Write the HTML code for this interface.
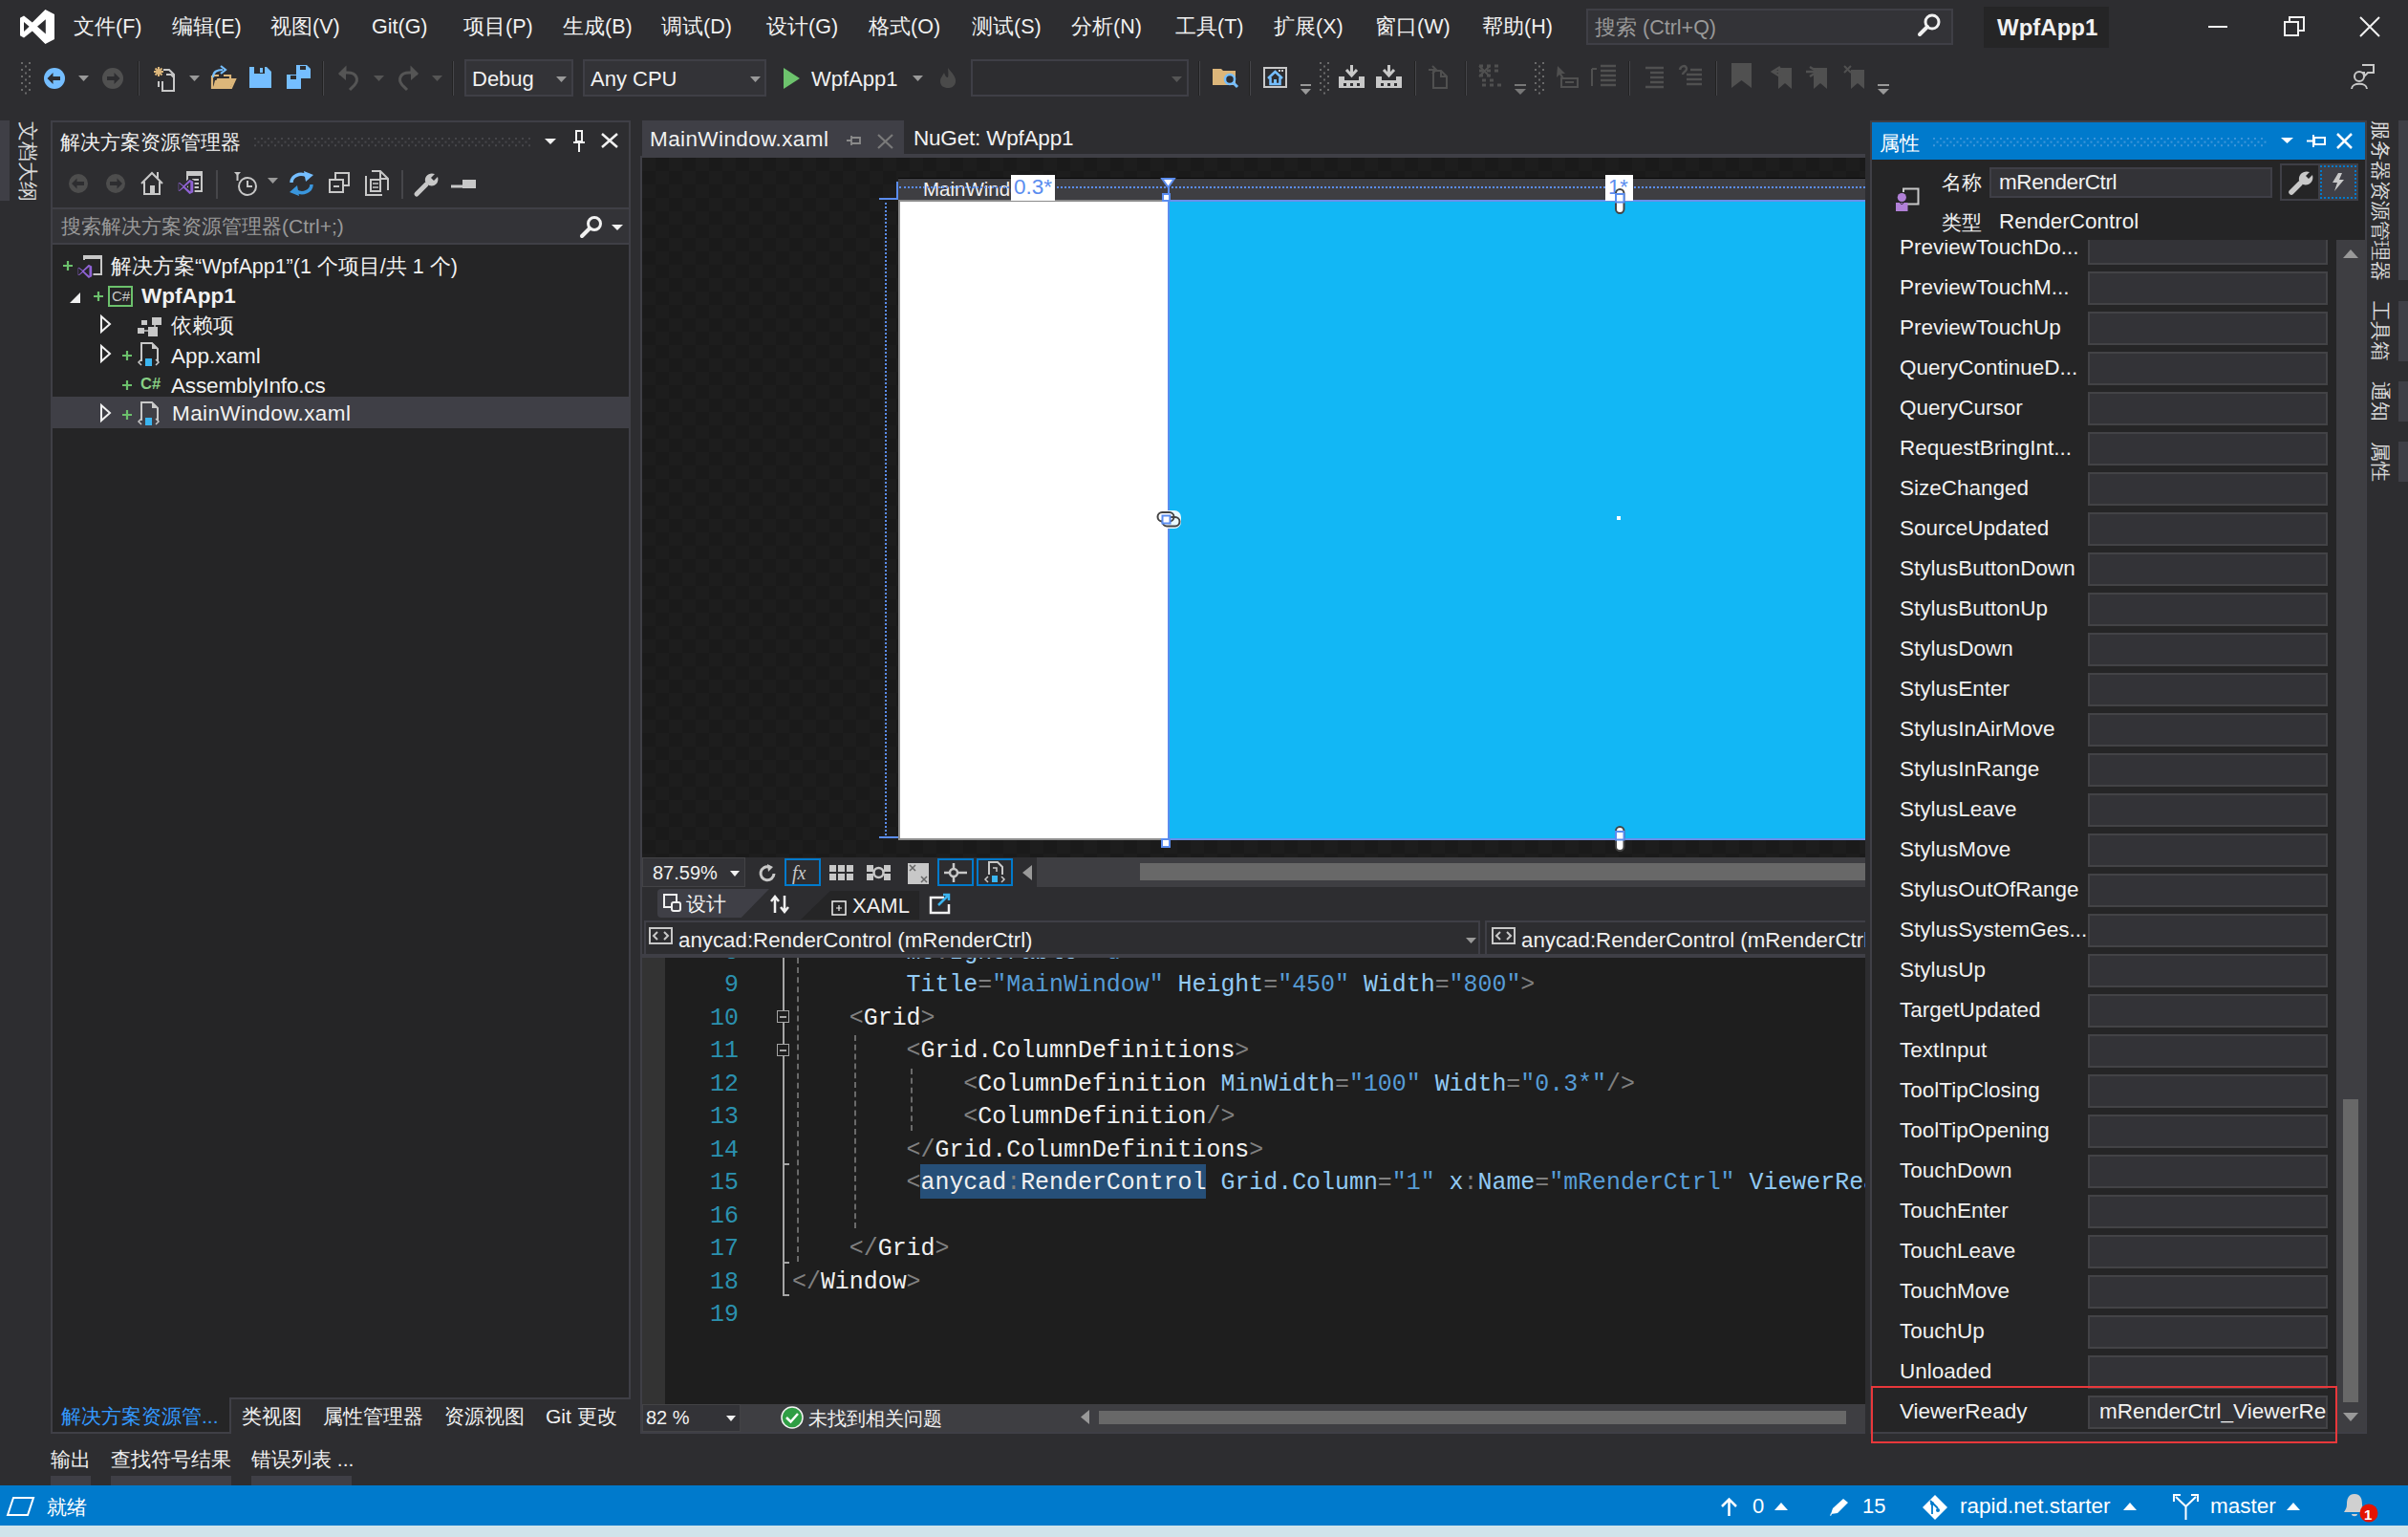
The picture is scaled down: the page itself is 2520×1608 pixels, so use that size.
<!DOCTYPE html><html><head><meta charset="utf-8"><style>
html,body{margin:0;padding:0;}
body{width:2520px;height:1608px;position:relative;overflow:hidden;background:#2d2d30;font-family:"Liberation Sans",sans-serif;}
.a{position:absolute;box-sizing:border-box;}
.t{position:absolute;white-space:pre;}
svg.a{overflow:visible;}
</style></head><body>
<svg class="a" style="left:21px;top:10px;" width="36" height="36" viewBox="0 0 36 36"><path fill="#fff" fill-rule="evenodd" d="M26.4 0 L36 5 L36 31 L26.4 36 L12.8 22.6 L4 29.5 L0 27.2 L0 8.8 L4 6.5 L12.8 13.4 Z M4 13 L9.6 17.8 L4 23 Z M26.8 10.3 L26.8 25.5 L18 17.8 Z"/></svg>
<div class="t" style="left:77px;top:17.8px;line-height:21.5px;font-size:21.5px;color:#f1f1f1;">文件(F)</div>
<div class="t" style="left:180px;top:17.8px;line-height:21.5px;font-size:21.5px;color:#f1f1f1;">编辑(E)</div>
<div class="t" style="left:283px;top:17.8px;line-height:21.5px;font-size:21.5px;color:#f1f1f1;">视图(V)</div>
<div class="t" style="left:389px;top:17.8px;line-height:21.5px;font-size:21.5px;color:#f1f1f1;">Git(G)</div>
<div class="t" style="left:485px;top:17.8px;line-height:21.5px;font-size:21.5px;color:#f1f1f1;">项目(P)</div>
<div class="t" style="left:589px;top:17.8px;line-height:21.5px;font-size:21.5px;color:#f1f1f1;">生成(B)</div>
<div class="t" style="left:692px;top:17.8px;line-height:21.5px;font-size:21.5px;color:#f1f1f1;">调试(D)</div>
<div class="t" style="left:802px;top:17.8px;line-height:21.5px;font-size:21.5px;color:#f1f1f1;">设计(G)</div>
<div class="t" style="left:909px;top:17.8px;line-height:21.5px;font-size:21.5px;color:#f1f1f1;">格式(O)</div>
<div class="t" style="left:1017px;top:17.8px;line-height:21.5px;font-size:21.5px;color:#f1f1f1;">测试(S)</div>
<div class="t" style="left:1121px;top:17.8px;line-height:21.5px;font-size:21.5px;color:#f1f1f1;">分析(N)</div>
<div class="t" style="left:1230px;top:17.8px;line-height:21.5px;font-size:21.5px;color:#f1f1f1;">工具(T)</div>
<div class="t" style="left:1333px;top:17.8px;line-height:21.5px;font-size:21.5px;color:#f1f1f1;">扩展(X)</div>
<div class="t" style="left:1439px;top:17.8px;line-height:21.5px;font-size:21.5px;color:#f1f1f1;">窗口(W)</div>
<div class="t" style="left:1551px;top:17.8px;line-height:21.5px;font-size:21.5px;color:#f1f1f1;">帮助(H)</div>
<div class="a" style="left:1660px;top:9px;width:384px;height:38px;background:#333337;border:2px solid #3f3f46;"></div>
<div class="t" style="left:1669px;top:18.8px;line-height:21.5px;font-size:21.5px;color:#999999;">搜索 (Ctrl+Q)</div>
<svg class="a" style="left:2005px;top:13px;" width="28" height="28" viewBox="0 0 28 28"><circle cx="17" cy="10" r="7" fill="none" stroke="#f1f1f1" stroke-width="3"/><path d="M12 15 L4 23" stroke="#f1f1f1" stroke-width="4" stroke-linecap="round"/></svg>
<div class="a" style="left:2076px;top:7px;width:131px;height:43px;background:#252526;"></div>
<div class="t" style="left:2090px;top:16.7px;line-height:24px;font-size:24px;color:#f1f1f1;font-weight:bold;">WpfApp1</div>
<div class="a" style="left:2311px;top:27px;width:20px;height:2px;background:#f1f1f1;"></div>
<svg class="a" style="left:2390px;top:17px;" width="22" height="22" viewBox="0 0 22 22"><rect x="1" y="6" width="14" height="14" fill="none" stroke="#f1f1f1" stroke-width="2"/><path d="M6 6 V1 H21 V15 H15" fill="none" stroke="#f1f1f1" stroke-width="2"/></svg>
<svg class="a" style="left:2469px;top:17px;" width="22" height="22" viewBox="0 0 22 22"><path d="M1 1 L21 21 M21 1 L1 21" stroke="#f1f1f1" stroke-width="2"/></svg>
<svg class="a" style="left:22px;top:65px;" width="10" height="32" viewBox="0 0 10 32"><rect x="0" y="0" width="2" height="2" fill="#6a6a6a"/><rect x="8" y="0" width="2" height="2" fill="#6a6a6a"/><rect x="4" y="3.5" width="2" height="2" fill="#6a6a6a"/><rect x="0" y="7.0" width="2" height="2" fill="#6a6a6a"/><rect x="8" y="7.0" width="2" height="2" fill="#6a6a6a"/><rect x="4" y="10.5" width="2" height="2" fill="#6a6a6a"/><rect x="0" y="14.0" width="2" height="2" fill="#6a6a6a"/><rect x="8" y="14.0" width="2" height="2" fill="#6a6a6a"/><rect x="4" y="17.5" width="2" height="2" fill="#6a6a6a"/><rect x="0" y="21.0" width="2" height="2" fill="#6a6a6a"/><rect x="8" y="21.0" width="2" height="2" fill="#6a6a6a"/><rect x="4" y="24.5" width="2" height="2" fill="#6a6a6a"/><rect x="0" y="28.0" width="2" height="2" fill="#6a6a6a"/><rect x="8" y="28.0" width="2" height="2" fill="#6a6a6a"/><rect x="4" y="31.5" width="2" height="2" fill="#6a6a6a"/></svg>
<svg class="a" style="left:45px;top:70px;" width="24" height="24" viewBox="0 0 24 24"><circle cx="12" cy="12" r="11" fill="#75beff"/><path d="M4.5 12 L10.5 6 V10 H18 V14 H10.5 V18 Z" fill="#2d2d30"/></svg>
<svg class="a" style="left:82px;top:79px;" width="11" height="6" viewBox="0 0 11 6"><path d="M0 0 H11 L5.5 6 Z" fill="#999999"/></svg>
<svg class="a" style="left:106px;top:70px;" width="24" height="24" viewBox="0 0 24 24"><circle cx="12" cy="12" r="11" fill="#505050"/><path d="M19.5 12 L13.5 6 V10 H6 V14 H13.5 V18 Z" fill="#2d2d30"/></svg>
<div class="a" style="left:144px;top:64px;width:1px;height:36px;background:#222222;"></div>
<div class="a" style="left:145px;top:64px;width:1px;height:36px;background:#46464a;"></div>
<svg class="a" style="left:160px;top:69px;" width="24" height="27" viewBox="0 0 24 27"><path d="M6 1 V11 M1 6 H11 M2.5 2.5 L9.5 9.5 M9.5 2.5 L2.5 9.5" stroke="#dcb67a" stroke-width="2"/><path d="M11 4 H17 L22 9 V17 M14 9 H19 L22 12 V26 H10 V16" fill="none" stroke="#c8c8c8" stroke-width="2"/><path d="M6 16 V22" stroke="#c8c8c8" stroke-width="2"/></svg>
<svg class="a" style="left:198px;top:79px;" width="11" height="6" viewBox="0 0 11 6"><path d="M0 0 H11 L5.5 6 Z" fill="#999999"/></svg>
<svg class="a" style="left:220px;top:69px;" width="27" height="25" viewBox="0 0 27 25"><path d="M2 10 V23 H22 L26 14 H8 L4 23" fill="none" stroke="#dcb67a" stroke-width="2.2"/><path d="M5 15 H25 L21 23 H3 Z" fill="#dcb67a"/><path d="M2 10 H9 M14 10 H21 V14" fill="none" stroke="#dcb67a" stroke-width="2.2"/><path d="M3 12 C3 6 7 4 13 4" fill="none" stroke="#75beff" stroke-width="2.2"/><path d="M11 0 L16 4 L11 8" fill="none" stroke="#75beff" stroke-width="2.2"/></svg>
<svg class="a" style="left:261px;top:70px;" width="23" height="22" viewBox="0 0 23 22"><path d="M0 0 H18 L23 5 V22 H0 Z" fill="#75beff"/><rect x="5" y="0" width="11" height="7" fill="#2d2d30"/><rect x="11" y="1" width="3" height="5" fill="#75beff"/></svg>
<svg class="a" style="left:299px;top:68px;" width="26" height="26" viewBox="0 0 26 26"><path d="M11 0 H22 L26 4 V14 H11 Z" fill="#75beff"/><rect x="15" y="1" width="6" height="4" fill="#2d2d30"/><path d="M1 10 H12 L16 14 V25 H1 Z" fill="#75beff"/><rect x="5" y="11" width="6" height="4" fill="#2d2d30"/></svg>
<div class="a" style="left:337px;top:64px;width:1px;height:36px;background:#222222;"></div>
<div class="a" style="left:338px;top:64px;width:1px;height:36px;background:#46464a;"></div>
<svg class="a" style="left:354px;top:69px;" width="22" height="25" viewBox="0 0 22 25"><path d="M1 9 L7 3 V7 H10 C19 7 22 14 17 20 L12 25" fill="none" stroke="#555555" stroke-width="3"/><path d="M1 9 L8 1 V15 Z" fill="#555555"/></svg>
<svg class="a" style="left:391px;top:79px;" width="11" height="6" viewBox="0 0 11 6"><path d="M0 0 H11 L5.5 6 Z" fill="#555555"/></svg>
<svg class="a" style="left:416px;top:69px;" width="22" height="25" viewBox="0 0 22 25"><path d="M21 9 L15 3 V7 H12 C3 7 0 14 5 20 L10 25" fill="none" stroke="#555555" stroke-width="3"/><path d="M21 9 L14 1 V15 Z" fill="#555555"/></svg>
<svg class="a" style="left:452px;top:79px;" width="11" height="6" viewBox="0 0 11 6"><path d="M0 0 H11 L5.5 6 Z" fill="#555555"/></svg>
<div class="a" style="left:473px;top:64px;width:1px;height:36px;background:#222222;"></div>
<div class="a" style="left:474px;top:64px;width:1px;height:36px;background:#46464a;"></div>
<div class="a" style="left:486px;top:62px;width:114px;height:39px;background:#333337;border:2px solid #3f3f46;"></div>
<div class="t" style="left:494px;top:72.4px;line-height:22px;font-size:22px;color:#f1f1f1;">Debug</div>
<svg class="a" style="left:582px;top:80px;" width="11" height="6" viewBox="0 0 11 6"><path d="M0 0 H11 L5.5 6 Z" fill="#999999"/></svg>
<div class="a" style="left:610px;top:62px;width:192px;height:39px;background:#333337;border:2px solid #3f3f46;"></div>
<div class="t" style="left:618px;top:72.4px;line-height:22px;font-size:22px;color:#f1f1f1;">Any CPU</div>
<svg class="a" style="left:785px;top:80px;" width="11" height="6" viewBox="0 0 11 6"><path d="M0 0 H11 L5.5 6 Z" fill="#999999"/></svg>
<svg class="a" style="left:820px;top:71px;" width="17" height="22" viewBox="0 0 17 22"><path d="M0 0 L17 11 L0 22 Z" fill="#6dc36d"/></svg>
<div class="t" style="left:849px;top:72.4px;line-height:22px;font-size:22px;color:#f1f1f1;">WpfApp1</div>
<svg class="a" style="left:955px;top:79px;" width="11" height="6" viewBox="0 0 11 6"><path d="M0 0 H11 L5.5 6 Z" fill="#999999"/></svg>
<svg class="a" style="left:983px;top:71px;" width="18" height="21" viewBox="0 0 18 21"><path d="M9 0 C14 6 18 10 17 15 C16 20 12 21 9 21 C5 21 1 19 1 14 C1 10 4 8 5 5 C6 8 7 10 9 10 C10 7 9 3 9 0 Z" fill="#4a4a4a"/></svg>
<div class="a" style="left:1016px;top:62px;width:228px;height:39px;background:#2d2d30;border:2px solid #3f3f46;"></div>
<svg class="a" style="left:1226px;top:80px;" width="11" height="6" viewBox="0 0 11 6"><path d="M0 0 H11 L5.5 6 Z" fill="#555555"/></svg>
<div class="a" style="left:1254px;top:64px;width:1px;height:36px;background:#222222;"></div>
<div class="a" style="left:1255px;top:64px;width:1px;height:36px;background:#46464a;"></div>
<svg class="a" style="left:1269px;top:69px;" width="27" height="23" viewBox="0 0 27 23"><path d="M0 3 H9 L11 5 H24 V20 H0 Z" fill="#dcb67a"/><circle cx="18" cy="14" r="5" fill="#2d2d30" stroke="#75beff" stroke-width="2.5"/><path d="M21 17 L26 22" stroke="#75beff" stroke-width="3"/></svg>
<div class="a" style="left:1307px;top:64px;width:1px;height:36px;background:#222222;"></div>
<div class="a" style="left:1308px;top:64px;width:1px;height:36px;background:#46464a;"></div>
<svg class="a" style="left:1322px;top:70px;" width="25" height="22" viewBox="0 0 25 22"><rect x="1" y="1" width="23" height="20" fill="none" stroke="#c8c8c8" stroke-width="2"/><rect x="16" y="3" width="2" height="2" fill="#c8c8c8"/><rect x="19" y="3" width="2" height="2" fill="#c8c8c8"/><path d="M5 12 L12.5 5 L20 12" fill="none" stroke="#75beff" stroke-width="2.5"/><path d="M7.5 11 V18 H17.5 V11" fill="none" stroke="#75beff" stroke-width="2.5"/><rect x="11" y="13" width="3" height="5" fill="#75beff"/></svg>
<svg class="a" style="left:1361px;top:88px;" width="11" height="11" viewBox="0 0 11 11"><rect x="0" y="0" width="11" height="2" fill="#999"/><path d="M0 5 H11 L5.5 11 Z" fill="#999"/></svg>
<svg class="a" style="left:1381px;top:65px;" width="10" height="32" viewBox="0 0 10 32"><rect x="0" y="0" width="2" height="2" fill="#6a6a6a"/><rect x="8" y="0" width="2" height="2" fill="#6a6a6a"/><rect x="4" y="3.5" width="2" height="2" fill="#6a6a6a"/><rect x="0" y="7.0" width="2" height="2" fill="#6a6a6a"/><rect x="8" y="7.0" width="2" height="2" fill="#6a6a6a"/><rect x="4" y="10.5" width="2" height="2" fill="#6a6a6a"/><rect x="0" y="14.0" width="2" height="2" fill="#6a6a6a"/><rect x="8" y="14.0" width="2" height="2" fill="#6a6a6a"/><rect x="4" y="17.5" width="2" height="2" fill="#6a6a6a"/><rect x="0" y="21.0" width="2" height="2" fill="#6a6a6a"/><rect x="8" y="21.0" width="2" height="2" fill="#6a6a6a"/><rect x="4" y="24.5" width="2" height="2" fill="#6a6a6a"/><rect x="0" y="28.0" width="2" height="2" fill="#6a6a6a"/><rect x="8" y="28.0" width="2" height="2" fill="#6a6a6a"/><rect x="4" y="31.5" width="2" height="2" fill="#6a6a6a"/></svg>
<svg class="a" style="left:1401px;top:68px;" width="27" height="24" viewBox="0 0 27 24"><path d="M13.5 0 V10 M8 5 L13.5 11 L19 5" fill="none" stroke="#c8c8c8" stroke-width="3"/><path d="M0 12 H6 V16 H21 V12 H27 V24 H0 Z" fill="#c8c8c8"/><rect x="5" y="19" width="3" height="3" fill="#2d2d30"/><rect x="12" y="19" width="3" height="3" fill="#2d2d30"/><rect x="19" y="19" width="3" height="3" fill="#2d2d30"/></svg>
<svg class="a" style="left:1440px;top:68px;" width="27" height="24" viewBox="0 0 27 24"><path d="M13.5 0 V10 M8 5 L13.5 11 L19 5" fill="none" stroke="#c8c8c8" stroke-width="3"/><path d="M0 12 H6 V16 H21 V12 H27 V24 H0 Z" fill="#c8c8c8"/><rect x="5" y="19" width="3" height="3" fill="#2d2d30"/><rect x="12" y="19" width="3" height="3" fill="#2d2d30"/><rect x="19" y="19" width="3" height="3" fill="#2d2d30"/></svg>
<div class="a" style="left:1480px;top:64px;width:1px;height:36px;background:#222222;"></div>
<div class="a" style="left:1481px;top:64px;width:1px;height:36px;background:#46464a;"></div>
<svg class="a" style="left:1494px;top:68px;" width="22" height="25" viewBox="0 0 22 25"><path d="M6 6 H14 L20 12 V24 H6 Z M14 6 V12 H20" fill="none" stroke="#505050" stroke-width="2"/><path d="M1 5 H8 M5 1 L9 5 L5 9" fill="none" stroke="#505050" stroke-width="2"/></svg>
<div class="a" style="left:1533px;top:64px;width:1px;height:36px;background:#222222;"></div>
<div class="a" style="left:1534px;top:64px;width:1px;height:36px;background:#46464a;"></div>
<svg class="a" style="left:1547px;top:68px;" width="24" height="25" viewBox="0 0 24 25"><path d="M1 1 H5 M1 6 H5 M1 11 H5 M9 1 H13 M9 6 H13 M9 11 H13 M17 1 H21 M17 6 H21 M4 16 H8 M12 16 H16 M4 21 H8 M12 21 H16 M20 21 H24" stroke="#505050" stroke-width="3"/><path d="M1 1 L12 12 M12 1 L1 12" stroke="#505050" stroke-width="2"/></svg>
<svg class="a" style="left:1585px;top:88px;" width="12" height="11" viewBox="0 0 12 11"><rect x="0" y="0" width="12" height="2" fill="#777"/><path d="M0 5 H12 L6 11 Z" fill="#777"/></svg>
<svg class="a" style="left:1606px;top:65px;" width="10" height="32" viewBox="0 0 10 32"><rect x="0" y="0" width="2" height="2" fill="#6a6a6a"/><rect x="8" y="0" width="2" height="2" fill="#6a6a6a"/><rect x="4" y="3.5" width="2" height="2" fill="#6a6a6a"/><rect x="0" y="7.0" width="2" height="2" fill="#6a6a6a"/><rect x="8" y="7.0" width="2" height="2" fill="#6a6a6a"/><rect x="4" y="10.5" width="2" height="2" fill="#6a6a6a"/><rect x="0" y="14.0" width="2" height="2" fill="#6a6a6a"/><rect x="8" y="14.0" width="2" height="2" fill="#6a6a6a"/><rect x="4" y="17.5" width="2" height="2" fill="#6a6a6a"/><rect x="0" y="21.0" width="2" height="2" fill="#6a6a6a"/><rect x="8" y="21.0" width="2" height="2" fill="#6a6a6a"/><rect x="4" y="24.5" width="2" height="2" fill="#6a6a6a"/><rect x="0" y="28.0" width="2" height="2" fill="#6a6a6a"/><rect x="8" y="28.0" width="2" height="2" fill="#6a6a6a"/><rect x="4" y="31.5" width="2" height="2" fill="#6a6a6a"/></svg>
<svg class="a" style="left:1628px;top:68px;" width="24" height="24" viewBox="0 0 24 24"><path d="M2 1 L10 9 L6 9 L9 14 L7 15 L4 10 L1 13 Z" fill="#505050"/><rect x="6" y="14" width="17" height="9" fill="none" stroke="#505050" stroke-width="2"/><path d="M10 18 H19" stroke="#505050" stroke-width="2"/></svg>
<svg class="a" style="left:1665px;top:68px;" width="26" height="25" viewBox="0 0 26 25"><path d="M10 1 H26 M10 6 H26 M10 11 H26 M10 16 H26 M10 21 H26" stroke="#505050" stroke-width="2.5"/><path d="M1 4 V22 M1 4 H6" stroke="#505050" stroke-width="2"/></svg>
<div class="a" style="left:1704px;top:64px;width:1px;height:36px;background:#222222;"></div>
<div class="a" style="left:1705px;top:64px;width:1px;height:36px;background:#46464a;"></div>
<svg class="a" style="left:1722px;top:70px;" width="19" height="21" viewBox="0 0 19 21"><path d="M0 1 H19 M5 6 H19 M5 11 H19 M5 16 H19 M0 21 H19" stroke="#505050" stroke-width="2.5"/></svg>
<svg class="a" style="left:1757px;top:68px;" width="24" height="24" viewBox="0 0 24 24"><path d="M8 10 H24 M8 15 H24 M8 20 H24" stroke="#505050" stroke-width="2.5"/><path d="M1 5 C2 0 8 0 8 4 C8 7 4 7 4 10 M12 5 H24" fill="none" stroke="#505050" stroke-width="2.5"/></svg>
<div class="a" style="left:1795px;top:64px;width:1px;height:36px;background:#222222;"></div>
<div class="a" style="left:1796px;top:64px;width:1px;height:36px;background:#46464a;"></div>
<svg class="a" style="left:1812px;top:66px;" width="21" height="26" viewBox="0 0 21 26"><path d="M0 0 H21 V26 L10.5 18 L0 26 Z" fill="#505050"/></svg>
<svg class="a" style="left:1854px;top:68px;" width="21" height="25" viewBox="0 0 21 25"><path d="M7 3 H21 V25 L14 19 L7 25 Z" fill="#505050"/><path d="M9 2 L1 7 L9 12" fill="none" stroke="#505050" stroke-width="2.5"/><path d="M1 7 H12" stroke="#505050" stroke-width="2.5"/></svg>
<svg class="a" style="left:1890px;top:68px;" width="22" height="25" viewBox="0 0 22 25"><path d="M8 3 H22 V25 L15 19 L8 25 Z" fill="#505050"/><path d="M4 2 L12 7 L4 12" fill="none" stroke="#505050" stroke-width="2.5"/><path d="M0 7 H11" stroke="#505050" stroke-width="2.5"/></svg>
<svg class="a" style="left:1929px;top:68px;" width="22" height="25" viewBox="0 0 22 25"><path d="M8 5 H22 V25 L15 19 L8 25 Z" fill="#505050"/><path d="M1 1 L8 8 M8 1 L1 8" stroke="#505050" stroke-width="2"/></svg>
<svg class="a" style="left:1965px;top:88px;" width="12" height="11" viewBox="0 0 12 11"><rect x="0" y="0" width="12" height="2" fill="#999"/><path d="M0 5 H12 L6 11 Z" fill="#999"/></svg>
<svg class="a" style="left:2460px;top:67px;" width="25" height="27" viewBox="0 0 25 27"><circle cx="9" cy="13" r="5" fill="none" stroke="#c8c8c8" stroke-width="2"/><path d="M1 26 C1 19 17 19 17 26" fill="none" stroke="#c8c8c8" stroke-width="2"/><path d="M12 1 H24 V9 H18 L14 13 V9 H12" fill="none" stroke="#c8c8c8" stroke-width="2"/></svg>
<div class="a" style="left:0px;top:126px;width:10px;height:84px;background:#3f3f46;"></div>
<div class="t" style="left:40px;top:127px;width:84px;height:22px;transform-origin:0 0;transform:rotate(90deg);font-size:20.5px;line-height:22px;color:#dadada;">文档大纲</div>
<div class="a" style="left:53px;top:126px;width:607px;height:2px;background:#3f3f46;"></div>
<div class="a" style="left:53px;top:126px;width:2px;height:1338px;background:#3f3f46;"></div>
<div class="a" style="left:658px;top:126px;width:2px;height:1338px;background:#3f3f46;"></div>
<div class="t" style="left:63px;top:138.2px;line-height:21px;font-size:21px;color:#f1f1f1;">解决方案资源管理器</div>
<svg class="a" style="left:266px;top:144px;" width="290" height="10" viewBox="0 0 290 10"><rect x="0.0" y="0" width="2" height="2" fill="#46464a"/><rect x="7.0" y="0" width="2" height="2" fill="#46464a"/><rect x="14.0" y="0" width="2" height="2" fill="#46464a"/><rect x="21.0" y="0" width="2" height="2" fill="#46464a"/><rect x="28.0" y="0" width="2" height="2" fill="#46464a"/><rect x="35.0" y="0" width="2" height="2" fill="#46464a"/><rect x="42.0" y="0" width="2" height="2" fill="#46464a"/><rect x="49.0" y="0" width="2" height="2" fill="#46464a"/><rect x="56.0" y="0" width="2" height="2" fill="#46464a"/><rect x="63.0" y="0" width="2" height="2" fill="#46464a"/><rect x="70.0" y="0" width="2" height="2" fill="#46464a"/><rect x="77.0" y="0" width="2" height="2" fill="#46464a"/><rect x="84.0" y="0" width="2" height="2" fill="#46464a"/><rect x="91.0" y="0" width="2" height="2" fill="#46464a"/><rect x="98.0" y="0" width="2" height="2" fill="#46464a"/><rect x="105.0" y="0" width="2" height="2" fill="#46464a"/><rect x="112.0" y="0" width="2" height="2" fill="#46464a"/><rect x="119.0" y="0" width="2" height="2" fill="#46464a"/><rect x="126.0" y="0" width="2" height="2" fill="#46464a"/><rect x="133.0" y="0" width="2" height="2" fill="#46464a"/><rect x="140.0" y="0" width="2" height="2" fill="#46464a"/><rect x="147.0" y="0" width="2" height="2" fill="#46464a"/><rect x="154.0" y="0" width="2" height="2" fill="#46464a"/><rect x="161.0" y="0" width="2" height="2" fill="#46464a"/><rect x="168.0" y="0" width="2" height="2" fill="#46464a"/><rect x="175.0" y="0" width="2" height="2" fill="#46464a"/><rect x="182.0" y="0" width="2" height="2" fill="#46464a"/><rect x="189.0" y="0" width="2" height="2" fill="#46464a"/><rect x="196.0" y="0" width="2" height="2" fill="#46464a"/><rect x="203.0" y="0" width="2" height="2" fill="#46464a"/><rect x="210.0" y="0" width="2" height="2" fill="#46464a"/><rect x="217.0" y="0" width="2" height="2" fill="#46464a"/><rect x="224.0" y="0" width="2" height="2" fill="#46464a"/><rect x="231.0" y="0" width="2" height="2" fill="#46464a"/><rect x="238.0" y="0" width="2" height="2" fill="#46464a"/><rect x="245.0" y="0" width="2" height="2" fill="#46464a"/><rect x="252.0" y="0" width="2" height="2" fill="#46464a"/><rect x="259.0" y="0" width="2" height="2" fill="#46464a"/><rect x="266.0" y="0" width="2" height="2" fill="#46464a"/><rect x="273.0" y="0" width="2" height="2" fill="#46464a"/><rect x="280.0" y="0" width="2" height="2" fill="#46464a"/><rect x="287.0" y="0" width="2" height="2" fill="#46464a"/><rect x="3.5" y="3.6" width="2" height="2" fill="#46464a"/><rect x="10.5" y="3.6" width="2" height="2" fill="#46464a"/><rect x="17.5" y="3.6" width="2" height="2" fill="#46464a"/><rect x="24.5" y="3.6" width="2" height="2" fill="#46464a"/><rect x="31.5" y="3.6" width="2" height="2" fill="#46464a"/><rect x="38.5" y="3.6" width="2" height="2" fill="#46464a"/><rect x="45.5" y="3.6" width="2" height="2" fill="#46464a"/><rect x="52.5" y="3.6" width="2" height="2" fill="#46464a"/><rect x="59.5" y="3.6" width="2" height="2" fill="#46464a"/><rect x="66.5" y="3.6" width="2" height="2" fill="#46464a"/><rect x="73.5" y="3.6" width="2" height="2" fill="#46464a"/><rect x="80.5" y="3.6" width="2" height="2" fill="#46464a"/><rect x="87.5" y="3.6" width="2" height="2" fill="#46464a"/><rect x="94.5" y="3.6" width="2" height="2" fill="#46464a"/><rect x="101.5" y="3.6" width="2" height="2" fill="#46464a"/><rect x="108.5" y="3.6" width="2" height="2" fill="#46464a"/><rect x="115.5" y="3.6" width="2" height="2" fill="#46464a"/><rect x="122.5" y="3.6" width="2" height="2" fill="#46464a"/><rect x="129.5" y="3.6" width="2" height="2" fill="#46464a"/><rect x="136.5" y="3.6" width="2" height="2" fill="#46464a"/><rect x="143.5" y="3.6" width="2" height="2" fill="#46464a"/><rect x="150.5" y="3.6" width="2" height="2" fill="#46464a"/><rect x="157.5" y="3.6" width="2" height="2" fill="#46464a"/><rect x="164.5" y="3.6" width="2" height="2" fill="#46464a"/><rect x="171.5" y="3.6" width="2" height="2" fill="#46464a"/><rect x="178.5" y="3.6" width="2" height="2" fill="#46464a"/><rect x="185.5" y="3.6" width="2" height="2" fill="#46464a"/><rect x="192.5" y="3.6" width="2" height="2" fill="#46464a"/><rect x="199.5" y="3.6" width="2" height="2" fill="#46464a"/><rect x="206.5" y="3.6" width="2" height="2" fill="#46464a"/><rect x="213.5" y="3.6" width="2" height="2" fill="#46464a"/><rect x="220.5" y="3.6" width="2" height="2" fill="#46464a"/><rect x="227.5" y="3.6" width="2" height="2" fill="#46464a"/><rect x="234.5" y="3.6" width="2" height="2" fill="#46464a"/><rect x="241.5" y="3.6" width="2" height="2" fill="#46464a"/><rect x="248.5" y="3.6" width="2" height="2" fill="#46464a"/><rect x="255.5" y="3.6" width="2" height="2" fill="#46464a"/><rect x="262.5" y="3.6" width="2" height="2" fill="#46464a"/><rect x="269.5" y="3.6" width="2" height="2" fill="#46464a"/><rect x="276.5" y="3.6" width="2" height="2" fill="#46464a"/><rect x="283.5" y="3.6" width="2" height="2" fill="#46464a"/><rect x="0.0" y="7.2" width="2" height="2" fill="#46464a"/><rect x="7.0" y="7.2" width="2" height="2" fill="#46464a"/><rect x="14.0" y="7.2" width="2" height="2" fill="#46464a"/><rect x="21.0" y="7.2" width="2" height="2" fill="#46464a"/><rect x="28.0" y="7.2" width="2" height="2" fill="#46464a"/><rect x="35.0" y="7.2" width="2" height="2" fill="#46464a"/><rect x="42.0" y="7.2" width="2" height="2" fill="#46464a"/><rect x="49.0" y="7.2" width="2" height="2" fill="#46464a"/><rect x="56.0" y="7.2" width="2" height="2" fill="#46464a"/><rect x="63.0" y="7.2" width="2" height="2" fill="#46464a"/><rect x="70.0" y="7.2" width="2" height="2" fill="#46464a"/><rect x="77.0" y="7.2" width="2" height="2" fill="#46464a"/><rect x="84.0" y="7.2" width="2" height="2" fill="#46464a"/><rect x="91.0" y="7.2" width="2" height="2" fill="#46464a"/><rect x="98.0" y="7.2" width="2" height="2" fill="#46464a"/><rect x="105.0" y="7.2" width="2" height="2" fill="#46464a"/><rect x="112.0" y="7.2" width="2" height="2" fill="#46464a"/><rect x="119.0" y="7.2" width="2" height="2" fill="#46464a"/><rect x="126.0" y="7.2" width="2" height="2" fill="#46464a"/><rect x="133.0" y="7.2" width="2" height="2" fill="#46464a"/><rect x="140.0" y="7.2" width="2" height="2" fill="#46464a"/><rect x="147.0" y="7.2" width="2" height="2" fill="#46464a"/><rect x="154.0" y="7.2" width="2" height="2" fill="#46464a"/><rect x="161.0" y="7.2" width="2" height="2" fill="#46464a"/><rect x="168.0" y="7.2" width="2" height="2" fill="#46464a"/><rect x="175.0" y="7.2" width="2" height="2" fill="#46464a"/><rect x="182.0" y="7.2" width="2" height="2" fill="#46464a"/><rect x="189.0" y="7.2" width="2" height="2" fill="#46464a"/><rect x="196.0" y="7.2" width="2" height="2" fill="#46464a"/><rect x="203.0" y="7.2" width="2" height="2" fill="#46464a"/><rect x="210.0" y="7.2" width="2" height="2" fill="#46464a"/><rect x="217.0" y="7.2" width="2" height="2" fill="#46464a"/><rect x="224.0" y="7.2" width="2" height="2" fill="#46464a"/><rect x="231.0" y="7.2" width="2" height="2" fill="#46464a"/><rect x="238.0" y="7.2" width="2" height="2" fill="#46464a"/><rect x="245.0" y="7.2" width="2" height="2" fill="#46464a"/><rect x="252.0" y="7.2" width="2" height="2" fill="#46464a"/><rect x="259.0" y="7.2" width="2" height="2" fill="#46464a"/><rect x="266.0" y="7.2" width="2" height="2" fill="#46464a"/><rect x="273.0" y="7.2" width="2" height="2" fill="#46464a"/><rect x="280.0" y="7.2" width="2" height="2" fill="#46464a"/><rect x="287.0" y="7.2" width="2" height="2" fill="#46464a"/></svg>
<svg class="a" style="left:570px;top:145px;" width="12" height="6" viewBox="0 0 12 6"><path d="M0 0 H12 L6.0 6 Z" fill="#f1f1f1"/></svg>
<svg class="a" style="left:600px;top:136px;" width="12" height="23" viewBox="0 0 12 23"><path d="M3 1 H9 V12 H3 Z" fill="none" stroke="#f1f1f1" stroke-width="2"/><path d="M0 13 H12 M6 13 V23" stroke="#f1f1f1" stroke-width="2"/></svg>
<svg class="a" style="left:628px;top:139px;" width="20" height="16" viewBox="0 0 20 16"><path d="M2 1 L18 15 M18 1 L2 15" stroke="#f1f1f1" stroke-width="2.5"/></svg>
<svg class="a" style="left:71px;top:181px;" width="22" height="22" viewBox="0 0 22 22"><circle cx="11" cy="11" r="10" fill="#4d4d4d"/><path d="M4 11 L9.5 5.5 V9 H17 V13 H9.5 V16.5 Z" fill="#2d2d30"/></svg>
<svg class="a" style="left:110px;top:181px;" width="22" height="22" viewBox="0 0 22 22"><circle cx="11" cy="11" r="10" fill="#4d4d4d"/><path d="M18 11 L12.5 5.5 V9 H5 V13 H12.5 V16.5 Z" fill="#2d2d30"/></svg>
<svg class="a" style="left:147px;top:179px;" width="24" height="25" viewBox="0 0 24 25"><path d="M1 13 L12 2 L23 13 M4 11 V24 H20 V11 M18 7 V1" fill="none" stroke="#c8c8c8" stroke-width="2"/><rect x="10" y="15" width="5" height="9" fill="#c8c8c8"/></svg>
<svg class="a" style="left:186px;top:179px;" width="27" height="25" viewBox="0 0 27 25"><rect x="10" y="1" width="15" height="20" fill="none" stroke="#c8c8c8" stroke-width="2"/><rect x="10" y="1" width="15" height="4" fill="#c8c8c8"/><path d="M15 9 H22 M15 13 H22 M15 17 H22" stroke="#c8c8c8" stroke-width="2"/><g transform="translate(0,8) scale(0.47)"><path fill="#9063d6" fill-rule="evenodd" stroke="#2d2d30" stroke-width="3" d="M26.4 0 L36 5 L36 31 L26.4 36 L12.8 22.6 L4 29.5 L0 27.2 L0 8.8 L4 6.5 L12.8 13.4 Z M4 13 L9.6 17.8 L4 23 Z M26.8 10.3 L26.8 25.5 L18 17.8 Z"/></g></svg>
<div class="a" style="left:226px;top:178px;width:2px;height:30px;background:#46464a;"></div>
<svg class="a" style="left:244px;top:179px;" width="26" height="27" viewBox="0 0 26 27"><path d="M1 1 H8 L4.5 5 Z" fill="#c8c8c8"/><path d="M4.5 4 V10" stroke="#c8c8c8" stroke-width="2"/><circle cx="15" cy="16" r="9" fill="none" stroke="#c8c8c8" stroke-width="2"/><path d="M15 10 V16 H20" fill="none" stroke="#c8c8c8" stroke-width="2"/></svg>
<svg class="a" style="left:280px;top:186px;" width="11" height="6" viewBox="0 0 11 6"><path d="M0 0 H11 L5.5 6 Z" fill="#999999"/></svg>
<svg class="a" style="left:302px;top:179px;" width="27" height="26" viewBox="0 0 27 26"><path d="M3 12 C3 5 12 1 19 5" fill="none" stroke="#75beff" stroke-width="3.5"/><path d="M16 0 L26 4 L18 11 Z" fill="#75beff"/><path d="M24 14 C24 21 15 25 8 21" fill="none" stroke="#3a96dd" stroke-width="3.5"/><path d="M11 26 L1 22 L9 15 Z" fill="#3a96dd"/></svg>
<svg class="a" style="left:344px;top:180px;" width="22" height="22" viewBox="0 0 22 22"><rect x="7" y="1" width="14" height="13" fill="none" stroke="#c8c8c8" stroke-width="2"/><rect x="1" y="8" width="14" height="13" fill="#2d2d30" stroke="#c8c8c8" stroke-width="2"/><path d="M5 15 H11" stroke="#c8c8c8" stroke-width="2"/></svg>
<svg class="a" style="left:380px;top:178px;" width="27" height="27" viewBox="0 0 27 27"><path d="M9 1 H18 L26 9 V21 M18 1 V9 H26" fill="none" stroke="#c8c8c8" stroke-width="2"/><path d="M3 6 V26 H20" fill="none" stroke="#c8c8c8" stroke-width="2"/><rect x="8" y="10" width="10" height="12" fill="none" stroke="#c8c8c8" stroke-width="2"/><path d="M10 14 H16 M10 18 H16" stroke="#c8c8c8" stroke-width="1.5"/></svg>
<div class="a" style="left:420px;top:178px;width:2px;height:30px;background:#46464a;"></div>
<svg class="a" style="left:433px;top:180px;" width="26" height="26" viewBox="0 0 26 26"><path d="M3 23 L13 13" stroke="#c8c8c8" stroke-width="5" stroke-linecap="round"/><path d="M12 10 C11 4 16 0 22 2 L18 6 L21 9 L25 5 C27 11 22 16 16 14 Z" fill="#c8c8c8"/></svg>
<svg class="a" style="left:472px;top:188px;" width="26" height="9" viewBox="0 0 26 9"><path d="M0 7 H26" stroke="#c8c8c8" stroke-width="3"/><rect x="12" y="0" width="14" height="9" fill="#c8c8c8"/></svg>
<div class="a" style="left:55px;top:217px;width:603px;height:2px;background:#3f3f46;"></div>
<div class="a" style="left:55px;top:219px;width:603px;height:36px;background:#333337;"></div>
<div class="a" style="left:55px;top:254px;width:603px;height:2px;background:#3f3f46;"></div>
<div class="t" style="left:64px;top:226.2px;line-height:21px;font-size:21px;color:#999999;">搜索解决方案资源管理器(Ctrl+;)</div>
<svg class="a" style="left:606px;top:225px;" width="26" height="24" viewBox="0 0 26 24"><circle cx="16" cy="9" r="6.5" fill="none" stroke="#f1f1f1" stroke-width="3"/><path d="M11 14 L3 22" stroke="#f1f1f1" stroke-width="4" stroke-linecap="round"/></svg>
<svg class="a" style="left:640px;top:235px;" width="12" height="6" viewBox="0 0 12 6"><path d="M0 0 H12 L6.0 6 Z" fill="#f1f1f1"/></svg>
<div class="a" style="left:55px;top:256px;width:603px;height:1206px;background:#252526;"></div>
<div class="a" style="left:55px;top:415px;width:603px;height:33px;background:#3f3f46;"></div>
<svg class="a" style="left:66px;top:273px;" width="10" height="10" viewBox="0 0 10 10"><path d="M5 0 V10 M0 5 H10" stroke="#6cc16c" stroke-width="2.2"/></svg>
<svg class="a" style="left:81px;top:266px;" width="27" height="26" viewBox="0 0 27 26"><path d="M7 6 V2 H25 V21 H14" fill="none" stroke="#c8c8c8" stroke-width="2"/><rect x="7" y="1" width="19" height="4" fill="#c8c8c8"/><g transform="translate(0,10) scale(0.44)"><path fill="#9063d6" fill-rule="evenodd" stroke="#252526" stroke-width="3" d="M26.4 0 L36 5 L36 31 L26.4 36 L12.8 22.6 L4 29.5 L0 27.2 L0 8.8 L4 6.5 L12.8 13.4 Z M4 13 L9.6 17.8 L4 23 Z M26.8 10.3 L26.8 25.5 L18 17.8 Z"/></g></svg>
<div class="t" style="left:116px;top:268.8px;line-height:21.5px;font-size:21.5px;color:#f1f1f1;">解决方案“WpfApp1”(1 个项目/共 1 个)</div>
<svg class="a" style="left:73px;top:306px;" width="11" height="11" viewBox="0 0 11 11"><path d="M11 0 V11 H0 Z" fill="#f1f1f1"/></svg>
<svg class="a" style="left:98px;top:305px;" width="10" height="10" viewBox="0 0 10 10"><path d="M5 0 V10 M0 5 H10" stroke="#6cc16c" stroke-width="2.2"/></svg>
<svg class="a" style="left:113px;top:299px;" width="26" height="22" viewBox="0 0 26 22"><rect x="1" y="1" width="24" height="20" fill="#252526" stroke="#6cc16c" stroke-width="2"/></svg>
<div class="t" style="left:117px;top:302.3px;line-height:15px;font-size:15px;color:#c8c8c8;">C#</div>
<div class="t" style="left:148px;top:299.0px;line-height:22.5px;font-size:22.5px;color:#f1f1f1;font-weight:bold;">WpfApp1</div>
<svg class="a" style="left:105px;top:330px;" width="11" height="18" viewBox="0 0 11 18"><path d="M1 1 L10 9 L1 17 Z" fill="none" stroke="#f1f1f1" stroke-width="2"/></svg>
<svg class="a" style="left:144px;top:332px;" width="26" height="20" viewBox="0 0 26 20"><rect x="15" y="0" width="10" height="8" fill="#c8c8c8"/><rect x="0" y="11" width="7" height="6" fill="#c8c8c8"/><rect x="11" y="10" width="10" height="10" fill="#c8c8c8"/><rect x="4" y="3" width="6" height="5" fill="#c8c8c8"/><path d="M7 14 H11 M18 8 V10" stroke="#c8c8c8" stroke-width="1.5"/></svg>
<div class="t" style="left:179px;top:330.8px;line-height:21.5px;font-size:21.5px;color:#f1f1f1;">依赖项</div>
<svg class="a" style="left:105px;top:361px;" width="11" height="18" viewBox="0 0 11 18"><path d="M1 1 L10 9 L1 17 Z" fill="none" stroke="#f1f1f1" stroke-width="2"/></svg>
<svg class="a" style="left:128px;top:367px;" width="10" height="10" viewBox="0 0 10 10"><path d="M5 0 V10 M0 5 H10" stroke="#6cc16c" stroke-width="2.2"/></svg>
<svg class="a" style="left:144px;top:358px;" width="26" height="27" viewBox="0 0 26 27"><path d="M4 20 V1 H15 L21 7 V20" fill="#252526" stroke="#c8c8c8" stroke-width="2"/><path d="M15 1 V7 H21 Z" fill="#c8c8c8"/><path d="M4 18 L1 21 L4 24 M19 18 L22 21 L19 24" fill="none" stroke="#c8c8c8" stroke-width="1.5"/><rect x="8" y="17" width="7" height="8" fill="#3bb5f0"/></svg>
<div class="t" style="left:179px;top:362.0px;line-height:22.5px;font-size:22.5px;color:#f1f1f1;">App.xaml</div>
<svg class="a" style="left:128px;top:398px;" width="10" height="10" viewBox="0 0 10 10"><path d="M5 0 V10 M0 5 H10" stroke="#6cc16c" stroke-width="2.2"/></svg>
<div class="t" style="left:147px;top:393.0px;line-height:16.5px;font-size:16.5px;color:#89d185;font-weight:bold;">C#</div>
<div class="t" style="left:179px;top:393.0px;line-height:22.5px;font-size:22.5px;color:#f1f1f1;letter-spacing:-0.15px;">AssemblyInfo.cs</div>
<svg class="a" style="left:105px;top:423px;" width="11" height="18" viewBox="0 0 11 18"><path d="M1 1 L10 9 L1 17 Z" fill="none" stroke="#f1f1f1" stroke-width="2"/></svg>
<svg class="a" style="left:128px;top:429px;" width="10" height="10" viewBox="0 0 10 10"><path d="M5 0 V10 M0 5 H10" stroke="#6cc16c" stroke-width="2.2"/></svg>
<svg class="a" style="left:144px;top:420px;" width="26" height="27" viewBox="0 0 26 27"><path d="M4 20 V1 H15 L21 7 V20" fill="#3f3f46" stroke="#c8c8c8" stroke-width="2"/><path d="M15 1 V7 H21 Z" fill="#c8c8c8"/><path d="M4 18 L1 21 L4 24 M19 18 L22 21 L19 24" fill="none" stroke="#c8c8c8" stroke-width="1.5"/><rect x="8" y="17" width="7" height="8" fill="#3bb5f0"/></svg>
<div class="t" style="left:180px;top:422.0px;line-height:22.5px;font-size:22.5px;color:#f1f1f1;letter-spacing:0.4px;">MainWindow.xaml</div>
<div class="a" style="left:240px;top:1462px;width:420px;height:2px;background:#3f3f46;"></div>
<div class="a" style="left:53px;top:1464px;width:2px;height:36px;background:#3f3f46;"></div>
<div class="a" style="left:240px;top:1464px;width:2px;height:36px;background:#3f3f46;"></div>
<div class="a" style="left:53px;top:1498px;width:189px;height:2px;background:#3f3f46;"></div>
<div class="a" style="left:55px;top:1462px;width:185px;height:36px;background:#252526;"></div>
<div class="t" style="left:64px;top:1471.2px;line-height:21px;font-size:21px;color:#3399ff;">解决方案资源管...</div>
<div class="t" style="left:253px;top:1471.2px;line-height:21px;font-size:21px;color:#f1f1f1;">类视图</div>
<div class="t" style="left:338px;top:1471.2px;line-height:21px;font-size:21px;color:#f1f1f1;">属性管理器</div>
<div class="t" style="left:465px;top:1471.2px;line-height:21px;font-size:21px;color:#f1f1f1;">资源视图</div>
<div class="t" style="left:571px;top:1471.2px;line-height:21px;font-size:21px;color:#f1f1f1;">Git 更改</div>
<div class="t" style="left:53px;top:1516.2px;line-height:21px;font-size:21px;color:#f1f1f1;">输出</div>
<div class="t" style="left:116px;top:1516.2px;line-height:21px;font-size:21px;color:#f1f1f1;">查找符号结果</div>
<div class="t" style="left:263px;top:1516.2px;line-height:21px;font-size:21px;color:#f1f1f1;">错误列表 ...</div>
<div class="a" style="left:53px;top:1544px;width:42px;height:10px;background:#3f3f46;"></div>
<div class="a" style="left:116px;top:1544px;width:126px;height:10px;background:#3f3f46;"></div>
<div class="a" style="left:263px;top:1544px;width:105px;height:10px;background:#3f3f46;"></div>
<div class="a" style="left:672px;top:126px;width:274px;height:39px;background:#3f3f46;"></div>
<div class="t" style="left:680px;top:135.0px;line-height:22.5px;font-size:22.5px;color:#f1f1f1;letter-spacing:0.4px;">MainWindow.xaml</div>
<svg class="a" style="left:886px;top:140px;" width="16" height="14" viewBox="0 0 16 14"><path d="M0 7 H5 M5 2 V12 M5 4 H14 V10 H5" fill="none" stroke="#8a8a8a" stroke-width="1.8"/></svg>
<svg class="a" style="left:918px;top:140px;" width="17" height="16" viewBox="0 0 17 16"><path d="M1 1 L16 15 M16 1 L1 15" stroke="#7a7a7a" stroke-width="2.2"/></svg>
<div class="t" style="left:956px;top:134.0px;line-height:22.5px;font-size:22.5px;color:#f1f1f1;letter-spacing:-0.2px;">NuGet: WpfApp1</div>
<div class="a" style="left:946px;top:161px;width:1006px;height:4px;background:#3f3f46;"></div>
<div class="a" style="left:670px;top:163px;width:2px;height:1337px;background:#3f3f46;"></div>
<div class="a" style="left:672px;top:165px;width:1280px;height:732px;background:#1c1c1c;background:conic-gradient(#1a1a1a 0 25%,#1d1d1d 0 50%,#1a1a1a 0 75%,#1d1d1d 0) 0 0/28px 28px;"></div>
<div class="a" style="left:940px;top:186px;width:1012px;height:1px;background:#0a0a0a;"></div>
<div class="a" style="left:940px;top:187px;width:1012px;height:23px;background:#3e3e42;"></div>
<div class="t" style="left:966px;top:187.6px;line-height:20.5px;font-size:20.5px;color:#f1f1f1;">MainWindow</div>
<div class="a" style="left:941px;top:209px;width:280px;height:2px;background:#8a8a8a;"></div>
<div class="a" style="left:942px;top:211px;width:280px;height:666px;background:#ffffff;"></div>
<div class="a" style="left:940px;top:209px;width:2px;height:670px;background:#8e8e8e;"></div>
<div class="a" style="left:1224px;top:211px;width:728px;height:666px;background:#12b7f5;"></div>
<div class="a" style="left:1221px;top:209px;width:731px;height:2px;background:#6a8fe8;"></div>
<div class="a" style="left:1222px;top:210px;width:2px;height:667px;background:#5b8def;"></div>
<div class="a" style="left:940px;top:877px;width:282px;height:2px;background:#8e8e8e;"></div>
<div class="a" style="left:1222px;top:877px;width:730px;height:2px;background:#6a8fe8;"></div>
<div class="a" style="left:941px;top:195px;width:1011px;height:0;border-top:2px dotted #5b8def;"></div>
<div class="a" style="left:926px;top:212px;width:0;height:662px;border-left:2px dotted #5b8def;"></div>
<div class="a" style="left:938px;top:190px;width:2px;height:19px;background:#5b8def;"></div>
<div class="a" style="left:920px;top:207px;width:20px;height:2px;background:#5b8def;"></div>
<div class="a" style="left:920px;top:875px;width:20px;height:2px;background:#5b8def;"></div>
<div class="a" style="left:1058px;top:183px;width:46px;height:27px;background:#ffffff;"></div>
<div class="t" style="left:1061px;top:185.0px;line-height:22.5px;font-size:22.5px;color:#5b8def;">0.3*</div>
<div class="a" style="left:1680px;top:183px;width:29px;height:27px;background:#ffffff;"></div>
<div class="t" style="left:1683px;top:185.4px;line-height:22px;font-size:22px;color:#5b8def;">1*</div>
<svg class="a" style="left:1215px;top:186px;" width="15" height="12" viewBox="0 0 15 12"><path d="M1.2 1 H13.8 L7.5 10 Z" fill="#ffffff" stroke="#5b8def" stroke-width="2"/></svg>
<div class="a" style="left:1222px;top:196px;width:2px;height:7px;background:#5b8def;"></div>
<div class="a" style="left:1216px;top:202px;width:9px;height:9px;background:#ffffff;border:2px solid #5b8def;"></div>
<div class="a" style="left:1215px;top:877px;width:10px;height:10px;background:#ffffff;border:2px solid #5b8def;"></div>
<svg class="a" style="left:1688px;top:196px;" width="14" height="30" viewBox="0 0 14 30"><rect x="3" y="2" width="8.5" height="15" rx="4.2" fill="#fff" stroke="#444" stroke-width="2"/><rect x="3" y="12" width="8.5" height="15" rx="4.2" fill="#fff" stroke="#444" stroke-width="2"/><rect x="3" y="7" width="8.5" height="8.5" fill="#fff" stroke="#5b8def" stroke-width="2"/></svg>
<svg class="a" style="left:1688px;top:863px;" width="14" height="30" viewBox="0 0 14 30"><rect x="3" y="2" width="8.5" height="15" rx="4.2" fill="#fff" stroke="#444" stroke-width="2"/><rect x="3" y="12" width="8.5" height="15" rx="4.2" fill="#fff" stroke="#444" stroke-width="2"/><rect x="3" y="7" width="8.5" height="8.5" fill="#fff" stroke="#5b8def" stroke-width="2"/></svg>
<svg class="a" style="left:1208px;top:532px;" width="30" height="22" viewBox="0 0 30 22"><rect x="2" y="2" width="26" height="19" rx="7" fill="#fff" opacity="0.9"/><rect x="3.5" y="4" width="17" height="9.5" rx="4.7" fill="#fff" stroke="#444" stroke-width="2"/><rect x="8.5" y="9" width="18" height="9.5" rx="4.7" fill="none" stroke="#444" stroke-width="2"/><rect x="8.5" y="7.5" width="8" height="8" fill="#fff" stroke="#5b8def" stroke-width="2"/></svg>
<div class="a" style="left:1692px;top:540px;width:4px;height:4px;background:#ffffff;"></div>
<div class="a" style="left:672px;top:897px;width:1280px;height:31px;background:#2d2d30;"></div>
<div class="a" style="left:672px;top:897px;width:108px;height:31px;background:#333337;border:1px solid #434346;"></div>
<div class="t" style="left:683px;top:903.1px;line-height:20px;font-size:20px;color:#f1f1f1;">87.59%</div>
<svg class="a" style="left:764px;top:911px;" width="10" height="6" viewBox="0 0 10 6"><path d="M0 0 H10 L5.0 6 Z" fill="#f1f1f1"/></svg>
<svg class="a" style="left:795px;top:904px;" width="18" height="20" viewBox="0 0 18 20"><path d="M15 10 A7 7 0 1 1 10 3" fill="none" stroke="#c8c8c8" stroke-width="3"/><path d="M8 0 L14 3 L9 8 Z" fill="#c8c8c8"/></svg>
<div class="a" style="left:821px;top:898px;width:38px;height:29px;border:2px solid #007acc;"></div>
<div class="t" style="left:829px;top:903.1px;line-height:20px;font-size:20px;color:#c8c8c8;font-style:italic;font-family:'Liberation Serif',serif;">fx</div>
<svg class="a" style="left:868px;top:905px;" width="26" height="16" viewBox="0 0 26 16"><g fill="#c8c8c8"><rect x="0" y="0" width="7" height="7"/><rect x="9" y="0" width="7" height="7"/><rect x="18" y="0" width="7" height="7"/><rect x="0" y="9" width="7" height="7"/><rect x="9" y="9" width="7" height="7"/><rect x="18" y="9" width="7" height="7"/></g></svg>
<svg class="a" style="left:907px;top:905px;" width="26" height="16" viewBox="0 0 26 16"><g fill="#c8c8c8"><rect x="0" y="0" width="7" height="7"/><rect x="18" y="0" width="7" height="7"/><rect x="0" y="9" width="7" height="7"/><rect x="18" y="9" width="7" height="7"/></g><circle cx="12.5" cy="8" r="5" fill="none" stroke="#c8c8c8" stroke-width="2.5"/></svg>
<svg class="a" style="left:950px;top:903px;" width="22" height="22" viewBox="0 0 22 22"><rect x="0" y="0" width="22" height="22" fill="#c8c8c8"/><path d="M2 2 L8 8 M8 2 L2 8 M14 14 L20 20 M20 14 L14 20" stroke="#666" stroke-width="1.5"/></svg>
<div class="a" style="left:981px;top:898px;width:38px;height:29px;border:2px solid #007acc;"></div>
<svg class="a" style="left:988px;top:903px;" width="24" height="20" viewBox="0 0 24 20"><path d="M0 10 H24 M10 0 V20" stroke="#c8c8c8" stroke-width="2.5"/><circle cx="10" cy="10" r="4" fill="#2d2d30" stroke="#c8c8c8" stroke-width="2.5"/></svg>
<div class="a" style="left:1022px;top:898px;width:38px;height:29px;border:2px solid #007acc;"></div>
<svg class="a" style="left:1030px;top:901px;" width="22" height="24" viewBox="0 0 22 24"><path d="M5 14 V1 H14 L19 6 V14" fill="none" stroke="#c8c8c8" stroke-width="2"/><path d="M9 7 H13 V11" fill="none" stroke="#c8c8c8" stroke-width="1.5"/><path d="M4 16 L1 19 L4 22 M18 16 L21 19 L18 22" fill="none" stroke="#c8c8c8" stroke-width="1.5"/><rect x="8" y="15" width="6" height="7" fill="#3bb5f0"/></svg>
<svg class="a" style="left:1070px;top:905px;" width="10" height="16" viewBox="0 0 10 16"><path d="M10 0 V16 L0 8 Z" fill="#999"/></svg>
<div class="a" style="left:1085px;top:897px;width:867px;height:31px;background:#3e3e42;"></div>
<div class="a" style="left:1193px;top:903px;width:759px;height:18px;background:#686868;"></div>
<div class="a" style="left:672px;top:928px;width:1280px;height:35px;background:#2d2d30;"></div>
<div class="a" style="left:688px;top:930px;width:117px;height:30px;background:#3f3f46;clip-path:polygon(0 0,100% 0,75% 100%,0 100%);border-radius:4px 0 0 4px;"></div>
<svg class="a" style="left:693px;top:934px;" width="20" height="20" viewBox="0 0 20 20"><rect x="1" y="1" width="15" height="15" fill="#f1f1f1"/><rect x="3" y="3" width="11" height="11" fill="#3f3f46"/><rect x="10" y="10" width="9" height="9" rx="2" fill="#3f3f46" stroke="#f1f1f1" stroke-width="2"/></svg>
<div class="t" style="left:718px;top:935.2px;line-height:21px;font-size:21px;color:#f1f1f1;">设计</div>
<svg class="a" style="left:806px;top:936px;" width="20" height="20" viewBox="0 0 20 20"><path d="M5 19 V3 M1 7 L5 2 L9 7 M15 1 V17 M11 13 L15 18 L19 13" fill="none" stroke="#f1f1f1" stroke-width="2.5"/></svg>
<div class="a" style="left:838px;top:932px;width:124px;height:30px;background:#252526;clip-path:polygon(25% 0,100% 0,100% 100%,0 100%);"></div>
<svg class="a" style="left:870px;top:942px;" width="16" height="16" viewBox="0 0 16 16"><rect x="1" y="1" width="14" height="14" fill="none" stroke="#f1f1f1" stroke-width="1.5"/><path d="M5 8 H11 M8 5 V11" stroke="#f1f1f1" stroke-width="1.2"/></svg>
<div class="t" style="left:892px;top:937.4px;line-height:22px;font-size:22px;color:#f1f1f1;">XAML</div>
<svg class="a" style="left:973px;top:935px;" width="22" height="21" viewBox="0 0 22 21"><path d="M15 4 H1 V20 H20 V11" fill="none" stroke="#f1f1f1" stroke-width="2.5"/><path d="M9 12 L19 2 M14 1 H20 V7" fill="none" stroke="#3bb5f0" stroke-width="2.5"/></svg>
<div class="a" style="left:672px;top:963px;width:1280px;height:39px;background:#2d2d30;"></div>
<div class="a" style="left:674px;top:963px;width:875px;height:37px;background:#2d2d30;border:2px solid #3f3f46;"></div>
<svg class="a" style="left:679px;top:970px;" width="25" height="18" viewBox="0 0 25 18"><rect x="1" y="1" width="23" height="16" fill="none" stroke="#c8c8c8" stroke-width="2"/><path d="M9 5 L5 9 L9 13 M16 5 L20 9 L16 13" fill="none" stroke="#c8c8c8" stroke-width="2"/></svg>
<div class="t" style="left:710px;top:973.1px;line-height:22.3px;font-size:22.3px;color:#f1f1f1;">anycad:RenderControl (mRenderCtrl)</div>
<svg class="a" style="left:1534px;top:981px;" width="11" height="6" viewBox="0 0 11 6"><path d="M0 0 H11 L5.5 6 Z" fill="#999999"/></svg>
<div class="a" style="left:1554px;top:963px;width:398px;height:37px;background:#2d2d30;border:2px solid #3f3f46;border-right:none;"></div>
<svg class="a" style="left:1561px;top:970px;" width="25" height="18" viewBox="0 0 25 18"><rect x="1" y="1" width="23" height="16" fill="none" stroke="#c8c8c8" stroke-width="2"/><path d="M9 5 L5 9 L9 13 M16 5 L20 9 L16 13" fill="none" stroke="#c8c8c8" stroke-width="2"/></svg>
<div class="a" style="left:1590px;top:965px;width:362px;height:35px;overflow:hidden;"><div class="t" style="left:2px;top:8.1px;line-height:22.3px;font-size:22.3px;color:#f1f1f1;">anycad:RenderControl (mRenderCtrl)</div></div>
<div class="a" style="left:672px;top:998px;width:1280px;height:4px;background:#3f3f46;"></div>
<div class="a" style="left:672px;top:1002px;width:24px;height:467px;background:#333333;"></div>
<div class="a" style="left:696px;top:1002px;width:1256px;height:467px;background:#1e1e1e;"></div>
<div class="a" style="left:672px;top:1002px;width:1280px;height:467px;overflow:hidden;"><div class="a" style="left:291px;top:216px;width:299px;height:36px;background:#264f78;"></div><div class="t" style="left:86.0px;top:-18.3px;font-family:'Liberation Mono',monospace;font-size:24.92px;line-height:24.92px;color:#2b91af;">8</div><div class="t" style="left:157px;top:-18.3px;font-family:'Liberation Mono',monospace;font-size:24.92px;line-height:24.92px;"><span style="color:#f0f0f0">        </span><span style="color:#92caf4">mc</span><span style="color:#808080">:</span><span style="color:#92caf4">Ignorable</span><span style="color:#808080">=</span><span style="color:#569cd6">"d"</span></div><div class="t" style="left:86.0px;top:16.2px;font-family:'Liberation Mono',monospace;font-size:24.92px;line-height:24.92px;color:#2b91af;">9</div><div class="t" style="left:157px;top:16.2px;font-family:'Liberation Mono',monospace;font-size:24.92px;line-height:24.92px;"><span style="color:#f0f0f0">        </span><span style="color:#92caf4">Title</span><span style="color:#808080">=</span><span style="color:#569cd6">"MainWindow"</span><span style="color:#f0f0f0"> </span><span style="color:#92caf4">Height</span><span style="color:#808080">=</span><span style="color:#569cd6">"450"</span><span style="color:#f0f0f0"> </span><span style="color:#92caf4">Width</span><span style="color:#808080">=</span><span style="color:#569cd6">"800"</span><span style="color:#808080">&gt;</span></div><div class="t" style="left:71.1px;top:50.7px;font-family:'Liberation Mono',monospace;font-size:24.92px;line-height:24.92px;color:#2b91af;">10</div><div class="t" style="left:157px;top:50.7px;font-family:'Liberation Mono',monospace;font-size:24.92px;line-height:24.92px;"><span style="color:#f0f0f0">    </span><span style="color:#808080">&lt;</span><span style="color:#f0f0f0">Grid</span><span style="color:#808080">&gt;</span></div><div class="t" style="left:71.1px;top:85.2px;font-family:'Liberation Mono',monospace;font-size:24.92px;line-height:24.92px;color:#2b91af;">11</div><div class="t" style="left:157px;top:85.2px;font-family:'Liberation Mono',monospace;font-size:24.92px;line-height:24.92px;"><span style="color:#f0f0f0">        </span><span style="color:#808080">&lt;</span><span style="color:#f0f0f0">Grid.ColumnDefinitions</span><span style="color:#808080">&gt;</span></div><div class="t" style="left:71.1px;top:119.7px;font-family:'Liberation Mono',monospace;font-size:24.92px;line-height:24.92px;color:#2b91af;">12</div><div class="t" style="left:157px;top:119.7px;font-family:'Liberation Mono',monospace;font-size:24.92px;line-height:24.92px;"><span style="color:#f0f0f0">            </span><span style="color:#808080">&lt;</span><span style="color:#f0f0f0">ColumnDefinition</span><span style="color:#f0f0f0"> </span><span style="color:#92caf4">MinWidth</span><span style="color:#808080">=</span><span style="color:#569cd6">"100"</span><span style="color:#f0f0f0"> </span><span style="color:#92caf4">Width</span><span style="color:#808080">=</span><span style="color:#569cd6">"0.3*"</span><span style="color:#808080">/&gt;</span></div><div class="t" style="left:71.1px;top:154.2px;font-family:'Liberation Mono',monospace;font-size:24.92px;line-height:24.92px;color:#2b91af;">13</div><div class="t" style="left:157px;top:154.2px;font-family:'Liberation Mono',monospace;font-size:24.92px;line-height:24.92px;"><span style="color:#f0f0f0">            </span><span style="color:#808080">&lt;</span><span style="color:#f0f0f0">ColumnDefinition</span><span style="color:#808080">/&gt;</span></div><div class="t" style="left:71.1px;top:188.7px;font-family:'Liberation Mono',monospace;font-size:24.92px;line-height:24.92px;color:#2b91af;">14</div><div class="t" style="left:157px;top:188.7px;font-family:'Liberation Mono',monospace;font-size:24.92px;line-height:24.92px;"><span style="color:#f0f0f0">        </span><span style="color:#808080">&lt;/</span><span style="color:#f0f0f0">Grid.ColumnDefinitions</span><span style="color:#808080">&gt;</span></div><div class="t" style="left:71.1px;top:223.2px;font-family:'Liberation Mono',monospace;font-size:24.92px;line-height:24.92px;color:#2b91af;">15</div><div class="t" style="left:157px;top:223.2px;font-family:'Liberation Mono',monospace;font-size:24.92px;line-height:24.92px;"><span style="color:#f0f0f0">        </span><span style="color:#808080">&lt;</span><span style="color:#f0f0f0">anycad<span style="color:#808080">:</span>RenderControl</span><span style="color:#f0f0f0"> </span><span style="color:#92caf4">Grid.Column</span><span style="color:#808080">=</span><span style="color:#569cd6">"1"</span><span style="color:#f0f0f0"> </span><span style="color:#92caf4">x</span><span style="color:#808080">:</span><span style="color:#92caf4">Name</span><span style="color:#808080">=</span><span style="color:#569cd6">"mRenderCtrl"</span><span style="color:#f0f0f0"> </span><span style="color:#92caf4">ViewerReady</span><span style="color:#808080">=</span><span style="color:#569cd6">"mRenderCtrl_ViewerReady"</span><span style="color:#808080">/&gt;</span></div><div class="t" style="left:71.1px;top:257.7px;font-family:'Liberation Mono',monospace;font-size:24.92px;line-height:24.92px;color:#2b91af;">16</div><div class="t" style="left:71.1px;top:292.2px;font-family:'Liberation Mono',monospace;font-size:24.92px;line-height:24.92px;color:#2b91af;">17</div><div class="t" style="left:157px;top:292.2px;font-family:'Liberation Mono',monospace;font-size:24.92px;line-height:24.92px;"><span style="color:#f0f0f0">    </span><span style="color:#808080">&lt;/</span><span style="color:#f0f0f0">Grid</span><span style="color:#808080">&gt;</span></div><div class="t" style="left:71.1px;top:326.7px;font-family:'Liberation Mono',monospace;font-size:24.92px;line-height:24.92px;color:#2b91af;">18</div><div class="t" style="left:157px;top:326.7px;font-family:'Liberation Mono',monospace;font-size:24.92px;line-height:24.92px;"><span style="color:#f0f0f0"></span><span style="color:#808080">&lt;/</span><span style="color:#f0f0f0">Window</span><span style="color:#808080">&gt;</span></div><div class="t" style="left:71.1px;top:361.2px;font-family:'Liberation Mono',monospace;font-size:24.92px;line-height:24.92px;color:#2b91af;">19</div></div>
<div class="a" style="left:819px;top:1002px;width:2px;height:55px;background:#a5a5a5;"></div>
<div class="a" style="left:813px;top:1057px;width:13px;height:13px;border:1.5px solid #a5a5a5;"></div>
<div class="a" style="left:816px;top:1062.5px;width:7px;height:2px;background:#a5a5a5;"></div>
<div class="a" style="left:819px;top:1070px;width:2px;height:22px;background:#a5a5a5;"></div>
<div class="a" style="left:813px;top:1092px;width:13px;height:13px;border:1.5px solid #a5a5a5;"></div>
<div class="a" style="left:816px;top:1097.5px;width:7px;height:2px;background:#a5a5a5;"></div>
<div class="a" style="left:819px;top:1105px;width:2px;height:250px;background:#a5a5a5;"></div>
<div class="a" style="left:819px;top:1217px;width:7px;height:2px;background:#a5a5a5;"></div>
<div class="a" style="left:819px;top:1320px;width:7px;height:2px;background:#a5a5a5;"></div>
<div class="a" style="left:819px;top:1354px;width:7px;height:2px;background:#a5a5a5;"></div>
<div class="a" style="left:834px;top:1002px;width:0;height:318px;border-left:2px dashed #6a6a6a;"></div>
<div class="a" style="left:894px;top:1083px;width:0;height:202px;border-left:2px dashed #6a6a6a;"></div>
<div class="a" style="left:953px;top:1118px;width:0;height:65px;border-left:2px dashed #6a6a6a;"></div>
<div class="a" style="left:672px;top:1469px;width:1280px;height:29px;background:#3e3e42;"></div>
<div class="a" style="left:672px;top:1469px;width:103px;height:29px;background:#333337;border:1px solid #434346;"></div>
<div class="t" style="left:676px;top:1473.1px;line-height:20px;font-size:20px;color:#f1f1f1;">82 %</div>
<svg class="a" style="left:760px;top:1481px;" width="10" height="6" viewBox="0 0 10 6"><path d="M0 0 H10 L5.0 6 Z" fill="#f1f1f1"/></svg>
<svg class="a" style="left:817px;top:1471px;" width="24" height="24" viewBox="0 0 24 24"><circle cx="12" cy="12" r="11" fill="#2f9e44" stroke="#f1f1f1" stroke-width="1.5"/><path d="M6 12 L10.5 16.5 L18 8" fill="none" stroke="#fff" stroke-width="2.5"/></svg>
<div class="t" style="left:846px;top:1474.1px;line-height:20px;font-size:20px;color:#f1f1f1;">未找到相关问题</div>
<svg class="a" style="left:1131px;top:1475px;" width="9" height="15" viewBox="0 0 9 15"><path d="M9 0 V15 L0 7.5 Z" fill="#999"/></svg>
<div class="a" style="left:1150px;top:1476px;width:782px;height:14px;background:#686868;"></div>
<div class="a" style="left:672px;top:1498px;width:1280px;height:2px;background:#3f3f46;"></div>
<div class="a" style="left:1957px;top:126px;width:520px;height:1374px;background:#252526;border:2px solid #3f3f46;border-bottom:none;"></div>
<div class="a" style="left:1959px;top:128px;width:516px;height:39px;background:#007acc;"></div>
<div class="t" style="left:1967px;top:139.2px;line-height:21px;font-size:21px;color:#ffffff;">属性</div>
<svg class="a" style="left:2023px;top:144px;" width="348" height="10" viewBox="0 0 348 10"><rect x="0.0" y="0" width="2" height="2" fill="#3d95d9"/><rect x="7.0" y="0" width="2" height="2" fill="#3d95d9"/><rect x="14.0" y="0" width="2" height="2" fill="#3d95d9"/><rect x="21.0" y="0" width="2" height="2" fill="#3d95d9"/><rect x="28.0" y="0" width="2" height="2" fill="#3d95d9"/><rect x="35.0" y="0" width="2" height="2" fill="#3d95d9"/><rect x="42.0" y="0" width="2" height="2" fill="#3d95d9"/><rect x="49.0" y="0" width="2" height="2" fill="#3d95d9"/><rect x="56.0" y="0" width="2" height="2" fill="#3d95d9"/><rect x="63.0" y="0" width="2" height="2" fill="#3d95d9"/><rect x="70.0" y="0" width="2" height="2" fill="#3d95d9"/><rect x="77.0" y="0" width="2" height="2" fill="#3d95d9"/><rect x="84.0" y="0" width="2" height="2" fill="#3d95d9"/><rect x="91.0" y="0" width="2" height="2" fill="#3d95d9"/><rect x="98.0" y="0" width="2" height="2" fill="#3d95d9"/><rect x="105.0" y="0" width="2" height="2" fill="#3d95d9"/><rect x="112.0" y="0" width="2" height="2" fill="#3d95d9"/><rect x="119.0" y="0" width="2" height="2" fill="#3d95d9"/><rect x="126.0" y="0" width="2" height="2" fill="#3d95d9"/><rect x="133.0" y="0" width="2" height="2" fill="#3d95d9"/><rect x="140.0" y="0" width="2" height="2" fill="#3d95d9"/><rect x="147.0" y="0" width="2" height="2" fill="#3d95d9"/><rect x="154.0" y="0" width="2" height="2" fill="#3d95d9"/><rect x="161.0" y="0" width="2" height="2" fill="#3d95d9"/><rect x="168.0" y="0" width="2" height="2" fill="#3d95d9"/><rect x="175.0" y="0" width="2" height="2" fill="#3d95d9"/><rect x="182.0" y="0" width="2" height="2" fill="#3d95d9"/><rect x="189.0" y="0" width="2" height="2" fill="#3d95d9"/><rect x="196.0" y="0" width="2" height="2" fill="#3d95d9"/><rect x="203.0" y="0" width="2" height="2" fill="#3d95d9"/><rect x="210.0" y="0" width="2" height="2" fill="#3d95d9"/><rect x="217.0" y="0" width="2" height="2" fill="#3d95d9"/><rect x="224.0" y="0" width="2" height="2" fill="#3d95d9"/><rect x="231.0" y="0" width="2" height="2" fill="#3d95d9"/><rect x="238.0" y="0" width="2" height="2" fill="#3d95d9"/><rect x="245.0" y="0" width="2" height="2" fill="#3d95d9"/><rect x="252.0" y="0" width="2" height="2" fill="#3d95d9"/><rect x="259.0" y="0" width="2" height="2" fill="#3d95d9"/><rect x="266.0" y="0" width="2" height="2" fill="#3d95d9"/><rect x="273.0" y="0" width="2" height="2" fill="#3d95d9"/><rect x="280.0" y="0" width="2" height="2" fill="#3d95d9"/><rect x="287.0" y="0" width="2" height="2" fill="#3d95d9"/><rect x="294.0" y="0" width="2" height="2" fill="#3d95d9"/><rect x="301.0" y="0" width="2" height="2" fill="#3d95d9"/><rect x="308.0" y="0" width="2" height="2" fill="#3d95d9"/><rect x="315.0" y="0" width="2" height="2" fill="#3d95d9"/><rect x="322.0" y="0" width="2" height="2" fill="#3d95d9"/><rect x="329.0" y="0" width="2" height="2" fill="#3d95d9"/><rect x="336.0" y="0" width="2" height="2" fill="#3d95d9"/><rect x="343.0" y="0" width="2" height="2" fill="#3d95d9"/><rect x="3.5" y="3.6" width="2" height="2" fill="#3d95d9"/><rect x="10.5" y="3.6" width="2" height="2" fill="#3d95d9"/><rect x="17.5" y="3.6" width="2" height="2" fill="#3d95d9"/><rect x="24.5" y="3.6" width="2" height="2" fill="#3d95d9"/><rect x="31.5" y="3.6" width="2" height="2" fill="#3d95d9"/><rect x="38.5" y="3.6" width="2" height="2" fill="#3d95d9"/><rect x="45.5" y="3.6" width="2" height="2" fill="#3d95d9"/><rect x="52.5" y="3.6" width="2" height="2" fill="#3d95d9"/><rect x="59.5" y="3.6" width="2" height="2" fill="#3d95d9"/><rect x="66.5" y="3.6" width="2" height="2" fill="#3d95d9"/><rect x="73.5" y="3.6" width="2" height="2" fill="#3d95d9"/><rect x="80.5" y="3.6" width="2" height="2" fill="#3d95d9"/><rect x="87.5" y="3.6" width="2" height="2" fill="#3d95d9"/><rect x="94.5" y="3.6" width="2" height="2" fill="#3d95d9"/><rect x="101.5" y="3.6" width="2" height="2" fill="#3d95d9"/><rect x="108.5" y="3.6" width="2" height="2" fill="#3d95d9"/><rect x="115.5" y="3.6" width="2" height="2" fill="#3d95d9"/><rect x="122.5" y="3.6" width="2" height="2" fill="#3d95d9"/><rect x="129.5" y="3.6" width="2" height="2" fill="#3d95d9"/><rect x="136.5" y="3.6" width="2" height="2" fill="#3d95d9"/><rect x="143.5" y="3.6" width="2" height="2" fill="#3d95d9"/><rect x="150.5" y="3.6" width="2" height="2" fill="#3d95d9"/><rect x="157.5" y="3.6" width="2" height="2" fill="#3d95d9"/><rect x="164.5" y="3.6" width="2" height="2" fill="#3d95d9"/><rect x="171.5" y="3.6" width="2" height="2" fill="#3d95d9"/><rect x="178.5" y="3.6" width="2" height="2" fill="#3d95d9"/><rect x="185.5" y="3.6" width="2" height="2" fill="#3d95d9"/><rect x="192.5" y="3.6" width="2" height="2" fill="#3d95d9"/><rect x="199.5" y="3.6" width="2" height="2" fill="#3d95d9"/><rect x="206.5" y="3.6" width="2" height="2" fill="#3d95d9"/><rect x="213.5" y="3.6" width="2" height="2" fill="#3d95d9"/><rect x="220.5" y="3.6" width="2" height="2" fill="#3d95d9"/><rect x="227.5" y="3.6" width="2" height="2" fill="#3d95d9"/><rect x="234.5" y="3.6" width="2" height="2" fill="#3d95d9"/><rect x="241.5" y="3.6" width="2" height="2" fill="#3d95d9"/><rect x="248.5" y="3.6" width="2" height="2" fill="#3d95d9"/><rect x="255.5" y="3.6" width="2" height="2" fill="#3d95d9"/><rect x="262.5" y="3.6" width="2" height="2" fill="#3d95d9"/><rect x="269.5" y="3.6" width="2" height="2" fill="#3d95d9"/><rect x="276.5" y="3.6" width="2" height="2" fill="#3d95d9"/><rect x="283.5" y="3.6" width="2" height="2" fill="#3d95d9"/><rect x="290.5" y="3.6" width="2" height="2" fill="#3d95d9"/><rect x="297.5" y="3.6" width="2" height="2" fill="#3d95d9"/><rect x="304.5" y="3.6" width="2" height="2" fill="#3d95d9"/><rect x="311.5" y="3.6" width="2" height="2" fill="#3d95d9"/><rect x="318.5" y="3.6" width="2" height="2" fill="#3d95d9"/><rect x="325.5" y="3.6" width="2" height="2" fill="#3d95d9"/><rect x="332.5" y="3.6" width="2" height="2" fill="#3d95d9"/><rect x="339.5" y="3.6" width="2" height="2" fill="#3d95d9"/><rect x="346.5" y="3.6" width="2" height="2" fill="#3d95d9"/><rect x="0.0" y="7.2" width="2" height="2" fill="#3d95d9"/><rect x="7.0" y="7.2" width="2" height="2" fill="#3d95d9"/><rect x="14.0" y="7.2" width="2" height="2" fill="#3d95d9"/><rect x="21.0" y="7.2" width="2" height="2" fill="#3d95d9"/><rect x="28.0" y="7.2" width="2" height="2" fill="#3d95d9"/><rect x="35.0" y="7.2" width="2" height="2" fill="#3d95d9"/><rect x="42.0" y="7.2" width="2" height="2" fill="#3d95d9"/><rect x="49.0" y="7.2" width="2" height="2" fill="#3d95d9"/><rect x="56.0" y="7.2" width="2" height="2" fill="#3d95d9"/><rect x="63.0" y="7.2" width="2" height="2" fill="#3d95d9"/><rect x="70.0" y="7.2" width="2" height="2" fill="#3d95d9"/><rect x="77.0" y="7.2" width="2" height="2" fill="#3d95d9"/><rect x="84.0" y="7.2" width="2" height="2" fill="#3d95d9"/><rect x="91.0" y="7.2" width="2" height="2" fill="#3d95d9"/><rect x="98.0" y="7.2" width="2" height="2" fill="#3d95d9"/><rect x="105.0" y="7.2" width="2" height="2" fill="#3d95d9"/><rect x="112.0" y="7.2" width="2" height="2" fill="#3d95d9"/><rect x="119.0" y="7.2" width="2" height="2" fill="#3d95d9"/><rect x="126.0" y="7.2" width="2" height="2" fill="#3d95d9"/><rect x="133.0" y="7.2" width="2" height="2" fill="#3d95d9"/><rect x="140.0" y="7.2" width="2" height="2" fill="#3d95d9"/><rect x="147.0" y="7.2" width="2" height="2" fill="#3d95d9"/><rect x="154.0" y="7.2" width="2" height="2" fill="#3d95d9"/><rect x="161.0" y="7.2" width="2" height="2" fill="#3d95d9"/><rect x="168.0" y="7.2" width="2" height="2" fill="#3d95d9"/><rect x="175.0" y="7.2" width="2" height="2" fill="#3d95d9"/><rect x="182.0" y="7.2" width="2" height="2" fill="#3d95d9"/><rect x="189.0" y="7.2" width="2" height="2" fill="#3d95d9"/><rect x="196.0" y="7.2" width="2" height="2" fill="#3d95d9"/><rect x="203.0" y="7.2" width="2" height="2" fill="#3d95d9"/><rect x="210.0" y="7.2" width="2" height="2" fill="#3d95d9"/><rect x="217.0" y="7.2" width="2" height="2" fill="#3d95d9"/><rect x="224.0" y="7.2" width="2" height="2" fill="#3d95d9"/><rect x="231.0" y="7.2" width="2" height="2" fill="#3d95d9"/><rect x="238.0" y="7.2" width="2" height="2" fill="#3d95d9"/><rect x="245.0" y="7.2" width="2" height="2" fill="#3d95d9"/><rect x="252.0" y="7.2" width="2" height="2" fill="#3d95d9"/><rect x="259.0" y="7.2" width="2" height="2" fill="#3d95d9"/><rect x="266.0" y="7.2" width="2" height="2" fill="#3d95d9"/><rect x="273.0" y="7.2" width="2" height="2" fill="#3d95d9"/><rect x="280.0" y="7.2" width="2" height="2" fill="#3d95d9"/><rect x="287.0" y="7.2" width="2" height="2" fill="#3d95d9"/><rect x="294.0" y="7.2" width="2" height="2" fill="#3d95d9"/><rect x="301.0" y="7.2" width="2" height="2" fill="#3d95d9"/><rect x="308.0" y="7.2" width="2" height="2" fill="#3d95d9"/><rect x="315.0" y="7.2" width="2" height="2" fill="#3d95d9"/><rect x="322.0" y="7.2" width="2" height="2" fill="#3d95d9"/><rect x="329.0" y="7.2" width="2" height="2" fill="#3d95d9"/><rect x="336.0" y="7.2" width="2" height="2" fill="#3d95d9"/><rect x="343.0" y="7.2" width="2" height="2" fill="#3d95d9"/></svg>
<svg class="a" style="left:2387px;top:144px;" width="13" height="6" viewBox="0 0 13 6"><path d="M0 0 H13 L6.5 6 Z" fill="#ffffff"/></svg>
<svg class="a" style="left:2414px;top:140px;" width="20" height="14" viewBox="0 0 20 14"><path d="M0 7.5 H6" stroke="#ffffff" stroke-width="2"/><path d="M7 1 V14" stroke="#ffffff" stroke-width="2"/><rect x="8" y="4" width="11" height="7" fill="none" stroke="#ffffff" stroke-width="2"/></svg>
<svg class="a" style="left:2445px;top:139px;" width="17" height="17" viewBox="0 0 17 17"><path d="M1 1 L16 16 M16 1 L1 16" stroke="#ffffff" stroke-width="2.5"/></svg>
<svg class="a" style="left:1984px;top:196px;" width="26" height="26" viewBox="0 0 26 26"><rect x="8" y="1.5" width="15.5" height="16" fill="none" stroke="#c8c8c8" stroke-width="2"/><rect x="2" y="5" width="9" height="11" fill="#252526"/><circle cx="6.3" cy="10.5" r="4.6" fill="#b180d7"/><path d="M0 16 H12.5 V25 H0 Z" fill="#b180d7"/><path d="M4 15.5 L6.3 18 L8.6 15.5" fill="none" stroke="#252526" stroke-width="1"/></svg>
<div class="t" style="left:2032px;top:180.2px;line-height:21px;font-size:21px;color:#f1f1f1;">名称</div>
<div class="a" style="left:2082px;top:175px;width:296px;height:32px;background:#333337;border:2px solid #3f3f46;"></div>
<div class="t" style="left:2092px;top:180.0px;line-height:22.5px;font-size:22.5px;color:#f1f1f1;letter-spacing:-0.4px;">mRenderCtrl</div>
<div class="a" style="left:2386px;top:171px;width:82px;height:39px;background:#252526;border:2px solid #3f3f46;"></div>
<div class="a" style="left:2426px;top:173px;width:2px;height:35px;background:#3f3f46;"></div>
<svg class="a" style="left:2395px;top:178px;" width="25" height="26" viewBox="0 0 25 26"><path d="M3 23 L12 14" stroke="#c8c8c8" stroke-width="5.5" stroke-linecap="round"/><path d="M11 11 C10 4 16 0 22 2 L18 6 L21 9 L25 5 C27 12 21 17 15 15 Z" fill="#c8c8c8"/></svg>
<div class="a" style="left:2428px;top:173px;width:38px;height:35px;background:#3f3f46;border:2px dotted #007acc;outline:0;"></div>
<svg class="a" style="left:2440px;top:181px;" width="14" height="19" viewBox="0 0 14 19"><path d="M7 0 L1 10 H6 L3 19 L13 7 H8 L11 0 Z" fill="#c8c8c8"/></svg>
<div class="t" style="left:2032px;top:222.2px;line-height:21px;font-size:21px;color:#f1f1f1;">类型</div>
<div class="t" style="left:2092px;top:221.0px;line-height:22.5px;font-size:22.5px;color:#f1f1f1;">RenderControl</div>
<div class="a" style="left:1959px;top:251px;width:486px;height:1247px;overflow:hidden;background:#252526;"><div class="t" style="left:29px;top:-3.0px;line-height:22.5px;font-size:22.5px;color:#f1f1f1;">PreviewTouchDo...</div><div class="a" style="left:226px;top:-9px;width:251px;height:35px;background:#333337;border:2px solid #434346;overflow:hidden;"></div><div class="t" style="left:29px;top:39.0px;line-height:22.5px;font-size:22.5px;color:#f1f1f1;">PreviewTouchM...</div><div class="a" style="left:226px;top:33px;width:251px;height:35px;background:#333337;border:2px solid #434346;overflow:hidden;"></div><div class="t" style="left:29px;top:81.0px;line-height:22.5px;font-size:22.5px;color:#f1f1f1;">PreviewTouchUp</div><div class="a" style="left:226px;top:75px;width:251px;height:35px;background:#333337;border:2px solid #434346;overflow:hidden;"></div><div class="t" style="left:29px;top:123.0px;line-height:22.5px;font-size:22.5px;color:#f1f1f1;">QueryContinueD...</div><div class="a" style="left:226px;top:117px;width:251px;height:35px;background:#333337;border:2px solid #434346;overflow:hidden;"></div><div class="t" style="left:29px;top:165.0px;line-height:22.5px;font-size:22.5px;color:#f1f1f1;">QueryCursor</div><div class="a" style="left:226px;top:159px;width:251px;height:35px;background:#333337;border:2px solid #434346;overflow:hidden;"></div><div class="t" style="left:29px;top:207.0px;line-height:22.5px;font-size:22.5px;color:#f1f1f1;">RequestBringInt...</div><div class="a" style="left:226px;top:201px;width:251px;height:35px;background:#333337;border:2px solid #434346;overflow:hidden;"></div><div class="t" style="left:29px;top:249.0px;line-height:22.5px;font-size:22.5px;color:#f1f1f1;">SizeChanged</div><div class="a" style="left:226px;top:243px;width:251px;height:35px;background:#333337;border:2px solid #434346;overflow:hidden;"></div><div class="t" style="left:29px;top:291.0px;line-height:22.5px;font-size:22.5px;color:#f1f1f1;">SourceUpdated</div><div class="a" style="left:226px;top:285px;width:251px;height:35px;background:#333337;border:2px solid #434346;overflow:hidden;"></div><div class="t" style="left:29px;top:333.0px;line-height:22.5px;font-size:22.5px;color:#f1f1f1;">StylusButtonDown</div><div class="a" style="left:226px;top:327px;width:251px;height:35px;background:#333337;border:2px solid #434346;overflow:hidden;"></div><div class="t" style="left:29px;top:375.0px;line-height:22.5px;font-size:22.5px;color:#f1f1f1;">StylusButtonUp</div><div class="a" style="left:226px;top:369px;width:251px;height:35px;background:#333337;border:2px solid #434346;overflow:hidden;"></div><div class="t" style="left:29px;top:417.0px;line-height:22.5px;font-size:22.5px;color:#f1f1f1;">StylusDown</div><div class="a" style="left:226px;top:411px;width:251px;height:35px;background:#333337;border:2px solid #434346;overflow:hidden;"></div><div class="t" style="left:29px;top:459.0px;line-height:22.5px;font-size:22.5px;color:#f1f1f1;">StylusEnter</div><div class="a" style="left:226px;top:453px;width:251px;height:35px;background:#333337;border:2px solid #434346;overflow:hidden;"></div><div class="t" style="left:29px;top:501.0px;line-height:22.5px;font-size:22.5px;color:#f1f1f1;">StylusInAirMove</div><div class="a" style="left:226px;top:495px;width:251px;height:35px;background:#333337;border:2px solid #434346;overflow:hidden;"></div><div class="t" style="left:29px;top:543.0px;line-height:22.5px;font-size:22.5px;color:#f1f1f1;">StylusInRange</div><div class="a" style="left:226px;top:537px;width:251px;height:35px;background:#333337;border:2px solid #434346;overflow:hidden;"></div><div class="t" style="left:29px;top:585.0px;line-height:22.5px;font-size:22.5px;color:#f1f1f1;">StylusLeave</div><div class="a" style="left:226px;top:579px;width:251px;height:35px;background:#333337;border:2px solid #434346;overflow:hidden;"></div><div class="t" style="left:29px;top:627.0px;line-height:22.5px;font-size:22.5px;color:#f1f1f1;">StylusMove</div><div class="a" style="left:226px;top:621px;width:251px;height:35px;background:#333337;border:2px solid #434346;overflow:hidden;"></div><div class="t" style="left:29px;top:669.0px;line-height:22.5px;font-size:22.5px;color:#f1f1f1;">StylusOutOfRange</div><div class="a" style="left:226px;top:663px;width:251px;height:35px;background:#333337;border:2px solid #434346;overflow:hidden;"></div><div class="t" style="left:29px;top:711.0px;line-height:22.5px;font-size:22.5px;color:#f1f1f1;">StylusSystemGes...</div><div class="a" style="left:226px;top:705px;width:251px;height:35px;background:#333337;border:2px solid #434346;overflow:hidden;"></div><div class="t" style="left:29px;top:753.0px;line-height:22.5px;font-size:22.5px;color:#f1f1f1;">StylusUp</div><div class="a" style="left:226px;top:747px;width:251px;height:35px;background:#333337;border:2px solid #434346;overflow:hidden;"></div><div class="t" style="left:29px;top:795.0px;line-height:22.5px;font-size:22.5px;color:#f1f1f1;">TargetUpdated</div><div class="a" style="left:226px;top:789px;width:251px;height:35px;background:#333337;border:2px solid #434346;overflow:hidden;"></div><div class="t" style="left:29px;top:837.0px;line-height:22.5px;font-size:22.5px;color:#f1f1f1;">TextInput</div><div class="a" style="left:226px;top:831px;width:251px;height:35px;background:#333337;border:2px solid #434346;overflow:hidden;"></div><div class="t" style="left:29px;top:879.0px;line-height:22.5px;font-size:22.5px;color:#f1f1f1;">ToolTipClosing</div><div class="a" style="left:226px;top:873px;width:251px;height:35px;background:#333337;border:2px solid #434346;overflow:hidden;"></div><div class="t" style="left:29px;top:921.0px;line-height:22.5px;font-size:22.5px;color:#f1f1f1;">ToolTipOpening</div><div class="a" style="left:226px;top:915px;width:251px;height:35px;background:#333337;border:2px solid #434346;overflow:hidden;"></div><div class="t" style="left:29px;top:963.0px;line-height:22.5px;font-size:22.5px;color:#f1f1f1;">TouchDown</div><div class="a" style="left:226px;top:957px;width:251px;height:35px;background:#333337;border:2px solid #434346;overflow:hidden;"></div><div class="t" style="left:29px;top:1005.0px;line-height:22.5px;font-size:22.5px;color:#f1f1f1;">TouchEnter</div><div class="a" style="left:226px;top:999px;width:251px;height:35px;background:#333337;border:2px solid #434346;overflow:hidden;"></div><div class="t" style="left:29px;top:1047.0px;line-height:22.5px;font-size:22.5px;color:#f1f1f1;">TouchLeave</div><div class="a" style="left:226px;top:1041px;width:251px;height:35px;background:#333337;border:2px solid #434346;overflow:hidden;"></div><div class="t" style="left:29px;top:1089.0px;line-height:22.5px;font-size:22.5px;color:#f1f1f1;">TouchMove</div><div class="a" style="left:226px;top:1083px;width:251px;height:35px;background:#333337;border:2px solid #434346;overflow:hidden;"></div><div class="t" style="left:29px;top:1131.0px;line-height:22.5px;font-size:22.5px;color:#f1f1f1;">TouchUp</div><div class="a" style="left:226px;top:1125px;width:251px;height:35px;background:#333337;border:2px solid #434346;overflow:hidden;"></div><div class="t" style="left:29px;top:1173.0px;line-height:22.5px;font-size:22.5px;color:#f1f1f1;">Unloaded</div><div class="a" style="left:226px;top:1167px;width:251px;height:35px;background:#333337;border:2px solid #434346;overflow:hidden;"></div><div class="t" style="left:29px;top:1215.0px;line-height:22.5px;font-size:22.5px;color:#f1f1f1;">ViewerReady</div><div class="a" style="left:226px;top:1209px;width:251px;height:35px;background:#333337;border:2px solid #434346;overflow:hidden;"></div><div class="a" style="left:228px;top:1211px;width:247px;height:31px;overflow:hidden;"><div class="t" style="left:10px;top:4.0px;line-height:22.5px;font-size:22.5px;color:#f1f1f1;">mRenderCtrl_ViewerReady</div></div></div>
<div class="a" style="left:2445px;top:251px;width:31px;height:1248px;background:#3e3e42;"></div>
<svg class="a" style="left:2452px;top:261px;" width="16" height="9" viewBox="0 0 16 9"><path d="M0 9 L8 0 L16 9 Z" fill="#999"/></svg>
<svg class="a" style="left:2452px;top:1478px;" width="16" height="9" viewBox="0 0 16 9"><path d="M0 0 H16 L8 9 Z" fill="#999"/></svg>
<div class="a" style="left:2452px;top:1150px;width:16px;height:317px;background:#686868;"></div>
<div class="a" style="left:1957px;top:1498px;width:520px;height:2px;background:#3f3f46;"></div>
<div class="a" style="left:1958px;top:1450px;width:488px;height:60px;border:2px solid #e8383b;"></div>
<div class="t" style="left:2502px;top:126px;width:167px;height:22px;transform-origin:0 0;transform:rotate(90deg);font-size:20.5px;line-height:22px;color:#dadada;">服务器资源管理器</div>
<div class="a" style="left:2510px;top:126px;width:10px;height:167px;background:#3f3f46;"></div>
<div class="t" style="left:2502px;top:315px;width:63px;height:22px;transform-origin:0 0;transform:rotate(90deg);font-size:20.5px;line-height:22px;color:#dadada;">工具箱</div>
<div class="a" style="left:2510px;top:315px;width:10px;height:63px;background:#3f3f46;"></div>
<div class="t" style="left:2502px;top:399px;width:42px;height:22px;transform-origin:0 0;transform:rotate(90deg);font-size:20.5px;line-height:22px;color:#dadada;">通知</div>
<div class="a" style="left:2510px;top:399px;width:10px;height:42px;background:#3f3f46;"></div>
<div class="t" style="left:2502px;top:462px;width:42px;height:22px;transform-origin:0 0;transform:rotate(90deg);font-size:20.5px;line-height:22px;color:#dadada;">属性</div>
<div class="a" style="left:2510px;top:462px;width:10px;height:42px;background:#3f3f46;"></div>
<div class="a" style="left:0px;top:1554px;width:2520px;height:42px;background:#007acc;"></div>
<div class="a" style="left:0px;top:1596px;width:2520px;height:12px;background:#d0e4eb;"></div>
<svg class="a" style="left:7px;top:1566px;" width="29" height="20" viewBox="0 0 29 20"><path d="M7 1 H28 L22 19 H1 Z" fill="none" stroke="#fff" stroke-width="2"/></svg>
<div class="t" style="left:49px;top:1566.2px;line-height:21px;font-size:21px;color:#ffffff;">就绪</div>
<svg class="a" style="left:1801px;top:1567px;" width="17" height="19" viewBox="0 0 17 19"><path d="M8.5 19 V2 M1 9 L8.5 1.5 L16 9" fill="none" stroke="#fff" stroke-width="2.5"/></svg>
<div class="t" style="left:1834px;top:1565.4px;line-height:22px;font-size:22px;color:#ffffff;">0</div>
<svg class="a" style="left:1857px;top:1572px;" width="14" height="8" viewBox="0 0 14 8"><path d="M0 8 L7 0 L14 8 Z" fill="#fff"/></svg>
<svg class="a" style="left:1914px;top:1567px;" width="21" height="19" viewBox="0 0 21 19"><path d="M2 17 L4 11 L15 1 L20 5 L9 16 Z" fill="#fff"/><path d="M3 18 L1 19 L2 16" fill="#fff"/></svg>
<div class="t" style="left:1949px;top:1565.4px;line-height:22px;font-size:22px;color:#ffffff;">15</div>
<svg class="a" style="left:2012px;top:1564px;" width="26" height="26" viewBox="0 0 26 26"><path d="M13 0 L26 13 L13 26 L0 13 Z" fill="#fff"/><circle cx="10" cy="9" r="2" fill="#007acc"/><circle cx="16" cy="16" r="2" fill="#007acc"/><path d="M8 6 L16 14 M10 9 V20" stroke="#007acc" stroke-width="1.8"/></svg>
<div class="t" style="left:2051px;top:1565.0px;line-height:22.5px;font-size:22.5px;color:#ffffff;">rapid.net.starter</div>
<svg class="a" style="left:2222px;top:1572px;" width="14" height="8" viewBox="0 0 14 8"><path d="M0 8 L7 0 L14 8 Z" fill="#fff"/></svg>
<svg class="a" style="left:2274px;top:1563px;" width="27" height="28" viewBox="0 0 27 28"><path d="M13.5 27 V13 L3 3 M13.5 13 L24 3 M1 8 V1 H8 M19 1 H26 V8" fill="none" stroke="#fff" stroke-width="2"/></svg>
<div class="t" style="left:2313px;top:1565.0px;line-height:22.5px;font-size:22.5px;color:#ffffff;">master</div>
<svg class="a" style="left:2393px;top:1572px;" width="14" height="8" viewBox="0 0 14 8"><path d="M0 8 L7 0 L14 8 Z" fill="#fff"/></svg>
<svg class="a" style="left:2452px;top:1562px;" width="24" height="26" viewBox="0 0 24 26"><path d="M12 1 C5 1 4 7 4 12 C4 16 2 18 1 20 H23 C22 18 20 16 20 12 C20 7 19 1 12 1 Z" fill="#d0d0d0"/><path d="M9 22 C9 25 15 25 15 22 Z" fill="#d0d0d0"/></svg>
<svg class="a" style="left:2469px;top:1573px;" width="20" height="20" viewBox="0 0 20 20"><circle cx="10" cy="10" r="9.5" fill="#e51400"/></svg>
<div class="t" style="left:2474px;top:1577.3px;line-height:15px;font-size:15px;color:#ffffff;font-weight:bold;">1</div></body></html>
